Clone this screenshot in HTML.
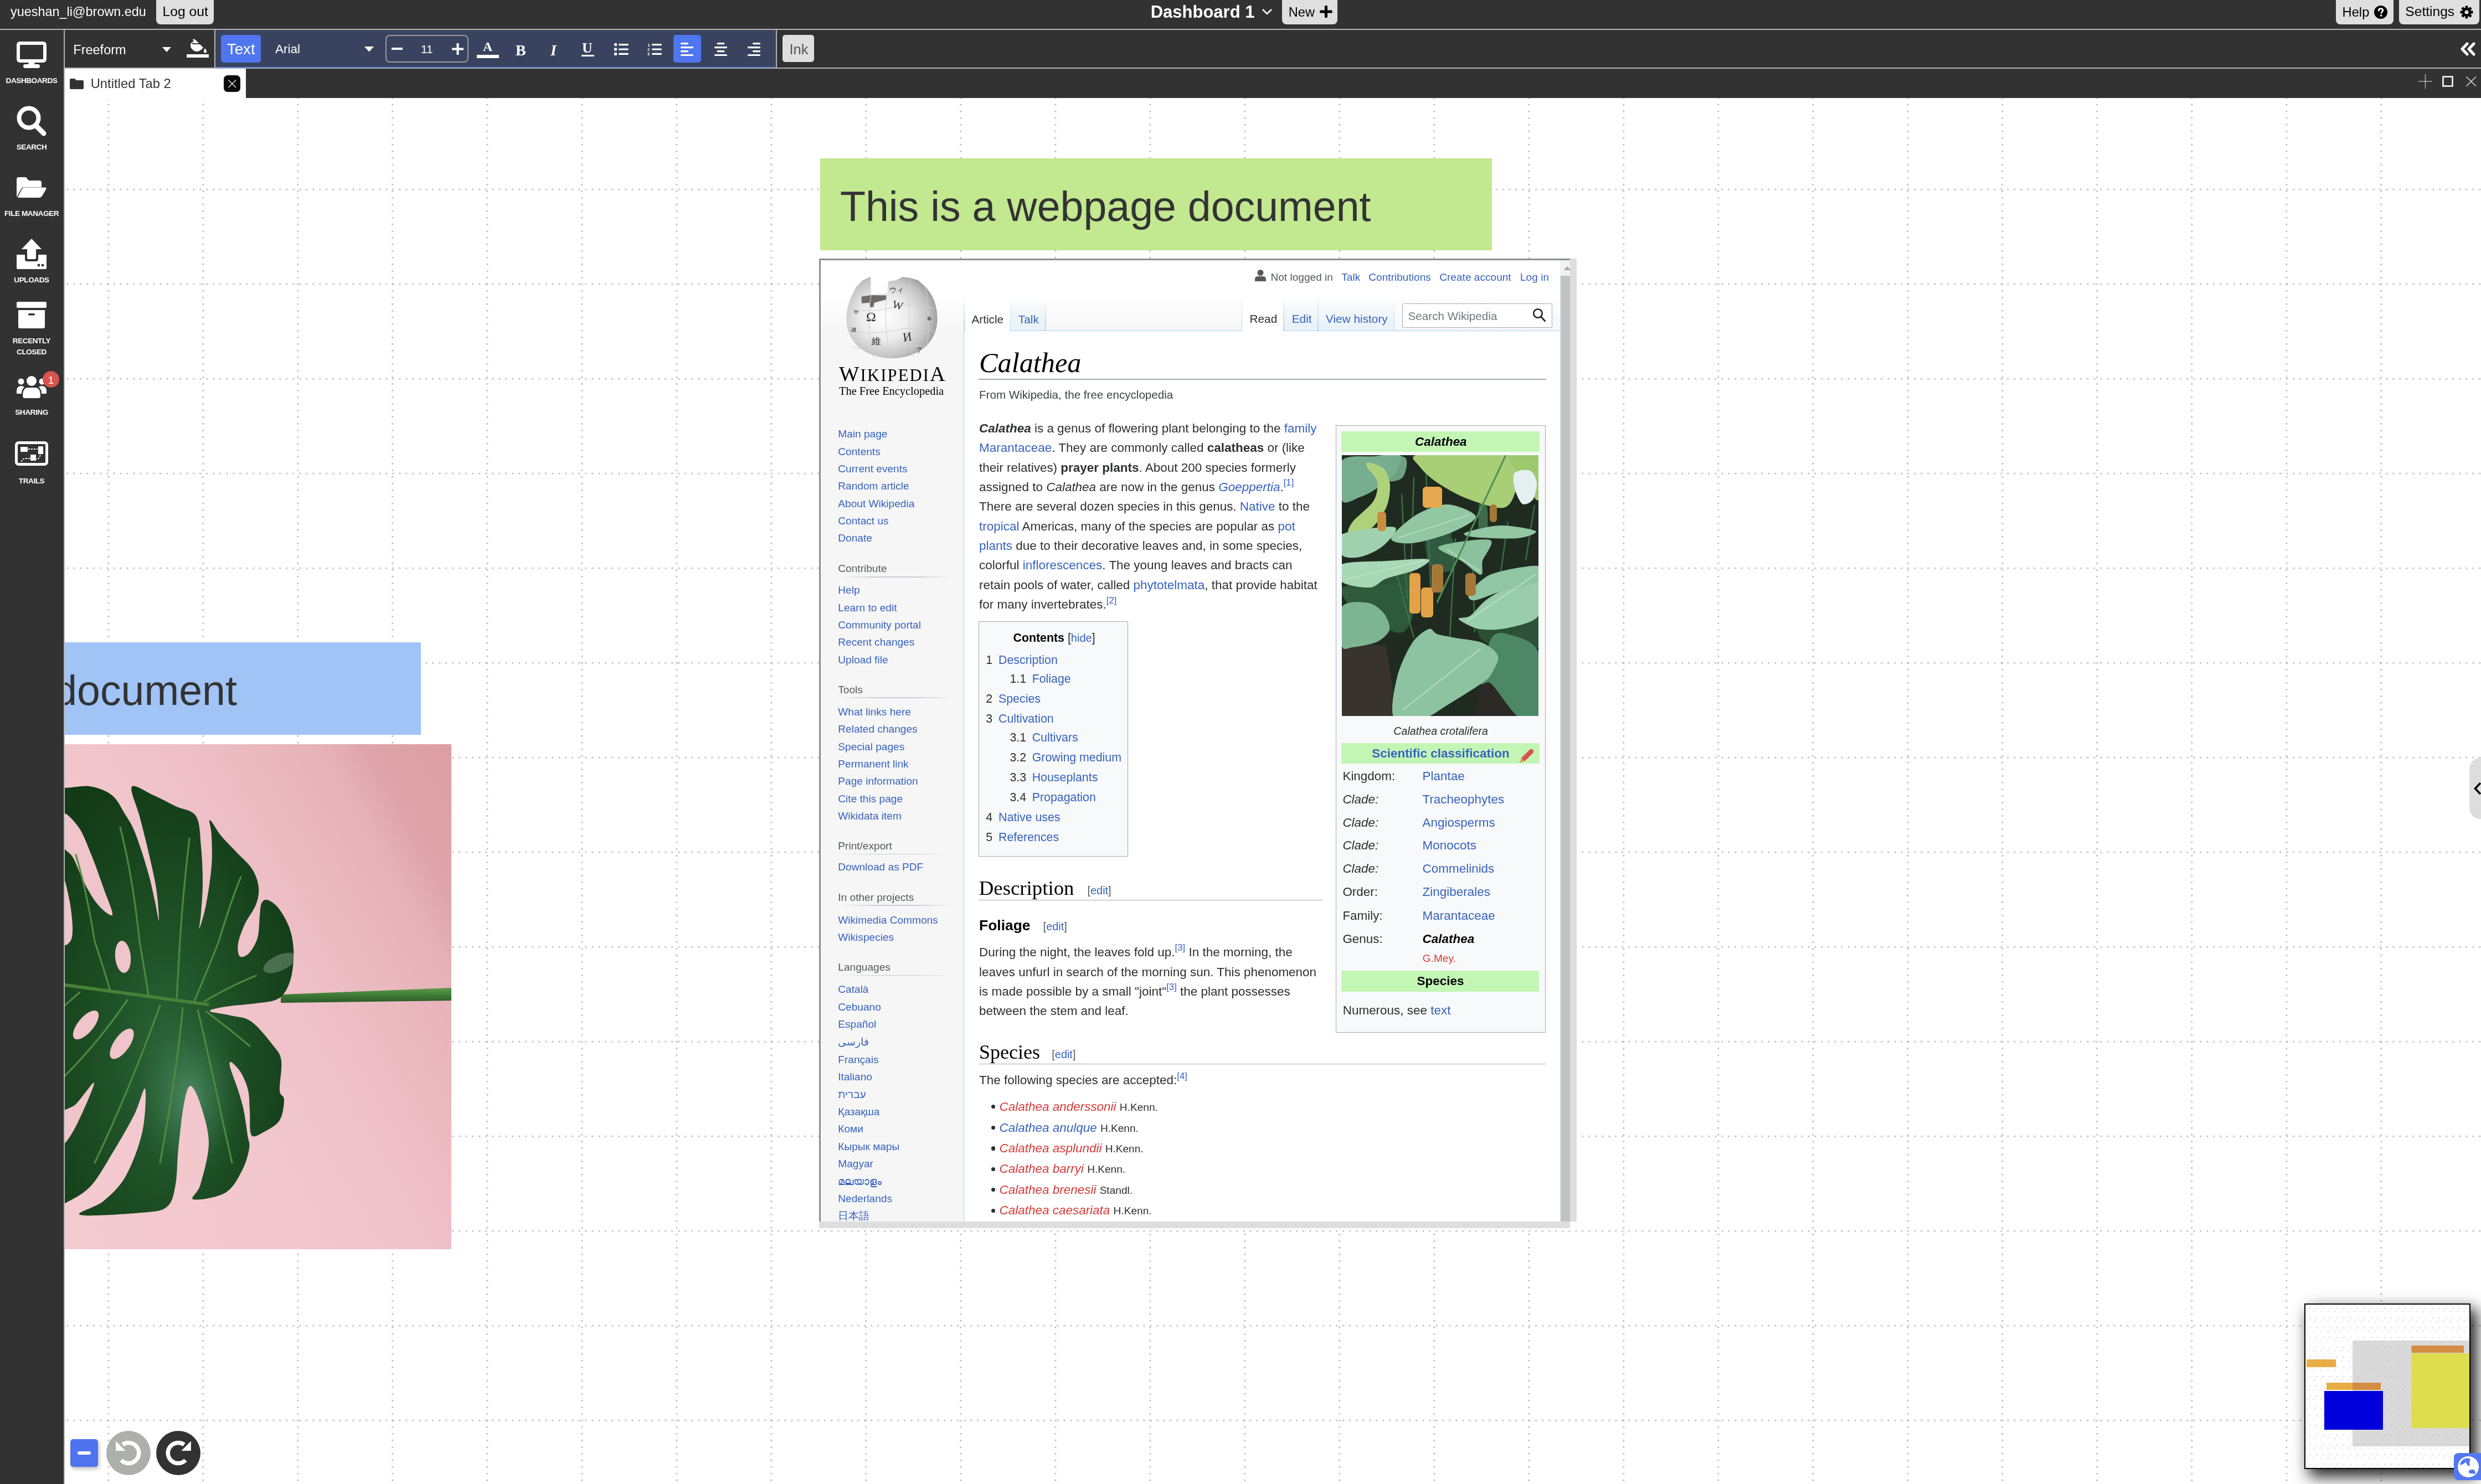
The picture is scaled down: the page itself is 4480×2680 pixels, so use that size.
<!DOCTYPE html><html><head><meta charset="utf-8"><style>html,body{margin:0;padding:0;width:4480px;height:2680px;overflow:hidden;background:#fff;font-family:"Liberation Sans",sans-serif}</style></head><body><div style="position:absolute;left:0;top:0;width:4480px;height:2680px;overflow:hidden;will-change:transform">
<svg style="position:absolute;left:0;top:0" width="4480" height="2680"><defs><pattern id="gv" x="194.5" y="8" width="171" height="12" patternUnits="userSpaceOnUse"><rect x="0" y="0" width="2.6" height="2.6" fill="#9d9d9d"/></pattern><pattern id="gh" x="0.5" y="340.8" width="12" height="171" patternUnits="userSpaceOnUse"><rect x="0" y="0" width="2.6" height="2.6" fill="#9d9d9d"/></pattern></defs><rect x="117" y="177" width="4363" height="2503" fill="#fff"/><rect x="117" y="177" width="4283" height="2503" fill="url(#gv)" opacity="0.75"/><rect x="117" y="177" width="4363" height="2503" fill="url(#gh)" opacity="0.75"/></svg>
<div style="position:absolute;left:0px;top:0px;width:4480px;height:52px;background:#323232"></div>
<div style="position:absolute;left:0px;top:52px;width:4480px;height:2px;background:#b4b4b4"></div>
<div style="position:absolute;left:19px;top:21.39px;line-height:0;white-space:nowrap;font-family:'Liberation Sans', sans-serif;font-size:23.4px;color:#fff;font-weight:normal;font-style:normal;">yueshan_li@brown.edu</div>
<div style="position:absolute;left:282px;top:-8px;width:104px;height:51.5px;background:#dfdfdf;border-radius:8px"></div>
<div style="position:absolute;left:293.5px;top:21.24px;line-height:0;white-space:nowrap;font-family:'Liberation Sans', sans-serif;font-size:24.7px;color:#000;font-weight:normal;font-style:normal;">Log out</div>
<div style="position:absolute;left:2077.7px;top:21.86px;line-height:0;white-space:nowrap;font-family:'Liberation Sans', sans-serif;font-size:31px;color:#fff;font-weight:bold;font-style:normal;">Dashboard 1</div>
<svg style="position:absolute;left:2278px;top:14px" width="20" height="14"><path d="M2 3 L10 11 L18 3" stroke="#fff" stroke-width="2.6" fill="none"/></svg>
<div style="position:absolute;left:2315.2px;top:-8px;width:99.4px;height:52px;background:#dfdfdf;border-radius:8px"></div>
<div style="position:absolute;left:2326.8px;top:22.02px;line-height:0;white-space:nowrap;font-family:'Liberation Sans', sans-serif;font-size:23.6px;color:#000;font-weight:normal;font-style:normal;">New</div>
<svg style="position:absolute;left:2383px;top:10px" width="23" height="22"><path d="M11.5 2 V20 M2.5 11 H20.5" stroke="#000" stroke-width="5" stroke-linecap="round"/></svg>
<div style="position:absolute;left:4218px;top:-8px;width:104px;height:52px;background:#dfdfdf;border-radius:8px"></div>
<div style="position:absolute;left:4229.6px;top:21.79px;line-height:0;white-space:nowrap;font-family:'Liberation Sans', sans-serif;font-size:23.7px;color:#000;font-weight:normal;font-style:normal;">Help</div>
<svg style="position:absolute;left:4287px;top:9.5px" width="24" height="24" viewBox="0 0 24 24"><circle cx="12" cy="12" r="12" fill="#000"/><path d="M8.3 9.2 C8.3 6.9 10 5.6 12.1 5.6 C14.3 5.6 15.8 7 15.8 8.8 C15.8 10.9 13.3 11.3 13.1 13.4" stroke="#fff" stroke-width="2.8" fill="none" stroke-linecap="round"/><circle cx="12.6" cy="18" r="1.8" fill="#fff"/></svg>
<div style="position:absolute;left:4332px;top:-8px;width:145px;height:52px;background:#dfdfdf;border-radius:8px"></div>
<div style="position:absolute;left:4343.3px;top:21.48px;line-height:0;white-space:nowrap;font-family:'Liberation Sans', sans-serif;font-size:24.6px;color:#000;font-weight:normal;font-style:normal;">Settings</div>
<svg style="position:absolute;left:4442px;top:9.5px" width="24" height="24" viewBox="0 0 24 24"><g fill="#000"><circle cx="12" cy="12" r="8.2"/><rect x="9.6" y="0.5" width="4.8" height="6" rx="1" transform="rotate(0 12 12)"/><rect x="9.6" y="0.5" width="4.8" height="6" rx="1" transform="rotate(45 12 12)"/><rect x="9.6" y="0.5" width="4.8" height="6" rx="1" transform="rotate(90 12 12)"/><rect x="9.6" y="0.5" width="4.8" height="6" rx="1" transform="rotate(135 12 12)"/><rect x="9.6" y="0.5" width="4.8" height="6" rx="1" transform="rotate(180 12 12)"/><rect x="9.6" y="0.5" width="4.8" height="6" rx="1" transform="rotate(225 12 12)"/><rect x="9.6" y="0.5" width="4.8" height="6" rx="1" transform="rotate(270 12 12)"/><rect x="9.6" y="0.5" width="4.8" height="6" rx="1" transform="rotate(315 12 12)"/></g><circle cx="12" cy="12" r="3.6" fill="#dfdfdf"/></svg>
<div style="position:absolute;left:0px;top:54px;width:115px;height:2626px;background:#323232"></div>
<div style="position:absolute;left:115px;top:54px;width:2px;height:2626px;background:#b4b4b4"></div>
<svg style="position:absolute;left:30px;top:75px" width="54" height="48" viewBox="0 0 54 48"><rect x="3" y="3" width="48" height="32" rx="3" fill="none" stroke="#fff" stroke-width="6"/><path d="M22 37 L21 42 H32 L33 37 Z" fill="#fff"/><rect x="12" y="41" width="30" height="7" rx="3.5" fill="#fff"/></svg>
<div style="position:absolute;left:57px;transform:translateX(-50%);top:146.29px;line-height:0;white-space:nowrap;font-family:'Liberation Sans', sans-serif;font-size:13.6px;color:#fff;font-weight:bold;font-style:normal;letter-spacing:-0.45px">DASHBOARDS</div>
<svg style="position:absolute;left:30px;top:191px" width="55" height="56" viewBox="0 0 55 56"><circle cx="22" cy="22" r="17.5" fill="none" stroke="#fff" stroke-width="8"/><path d="M36 37 L49 50" stroke="#fff" stroke-width="9" stroke-linecap="round"/></svg>
<div style="position:absolute;left:57px;transform:translateX(-50%);top:266.29px;line-height:0;white-space:nowrap;font-family:'Liberation Sans', sans-serif;font-size:13.6px;color:#fff;font-weight:bold;font-style:normal;letter-spacing:-0.45px">SEARCH</div>
<svg style="position:absolute;left:30px;top:320px" width="54" height="37" viewBox="0 0 54 37"><path d="M0 4 Q0 0 4 0 H17 L22 6 H41 Q45 6 45 10 V18 H14 Q10 18 8 22 L0 36 Z" fill="#fff"/><path d="M12 18.5 H51 Q55 18.5 53 22 L46 34 Q44 37 40 37 H4 Q1 37 3 34 L10 21 Q11 18.5 14 18.5 Z" fill="#fff"/></svg>
<div style="position:absolute;left:57px;transform:translateX(-50%);top:386.29px;line-height:0;white-space:nowrap;font-family:'Liberation Sans', sans-serif;font-size:13.6px;color:#fff;font-weight:bold;font-style:normal;letter-spacing:-0.45px">FILE MANAGER</div>
<svg style="position:absolute;left:30px;top:431px" width="54" height="55" viewBox="0 0 54 55"><path d="M27 0 L45 19 H35 V35 Q35 37 33 37 H21 Q19 37 19 35 V19 H9 Z" fill="#fff"/><path d="M0 29 H15 V37 Q15 41 19 41 H35 Q39 41 39 37 V29 H54 V53 Q54 55 52 55 H2 Q0 55 0 53 Z" fill="#fff"/><circle cx="40" cy="48" r="2.4" fill="#323232"/><circle cx="47" cy="48" r="2.4" fill="#323232"/></svg>
<div style="position:absolute;left:57px;transform:translateX(-50%);top:506.29px;line-height:0;white-space:nowrap;font-family:'Liberation Sans', sans-serif;font-size:13.6px;color:#fff;font-weight:bold;font-style:normal;letter-spacing:-0.45px">UPLOADS</div>
<svg style="position:absolute;left:30px;top:545px" width="54" height="48" viewBox="0 0 54 48"><rect x="0" y="0" width="54" height="11" rx="2" fill="#fff"/><path d="M3 15 H51 V45 Q51 48 48 48 H6 Q3 48 3 45 Z" fill="#fff"/><rect x="21" y="21" width="12" height="3.5" rx="1.5" fill="#323232"/></svg>
<div style="position:absolute;left:57px;transform:translateX(-50%);top:616.29px;line-height:0;white-space:nowrap;font-family:'Liberation Sans', sans-serif;font-size:13.6px;color:#fff;font-weight:bold;font-style:normal;letter-spacing:-0.45px">RECENTLY</div>
<div style="position:absolute;left:57px;transform:translateX(-50%);top:636.29px;line-height:0;white-space:nowrap;font-family:'Liberation Sans', sans-serif;font-size:13.6px;color:#fff;font-weight:bold;font-style:normal;letter-spacing:-0.45px">CLOSED</div>
<svg style="position:absolute;left:30px;top:679px" width="54" height="40" viewBox="0 0 54 40"><circle cx="8" cy="10" r="5.5" fill="#fff"/><circle cx="46" cy="10" r="5.5" fill="#fff"/><circle cx="27" cy="9" r="9" fill="#fff"/><path d="M0 28 Q0 18 8 18 Q12 18 14 20 Q9 24 9 32 H0 Z" fill="#fff"/><path d="M54 28 Q54 18 46 18 Q42 18 40 20 Q45 24 45 32 H54 Z" fill="#fff"/><path d="M11 36 Q11 21 21 21 H33 Q43 21 43 36 Q43 40 39 40 H15 Q11 40 11 36 Z" fill="#fff"/></svg>
<div style="position:absolute;left:77px;top:670px;width:30px;height:30px;border-radius:15px;background:#d9534f"></div>
<div style="position:absolute;left:92px;transform:translateX(-50%);top:687.42px;line-height:0;white-space:nowrap;font-family:'Liberation Sans', sans-serif;font-size:19px;color:#fff;font-weight:normal;font-style:normal;">1</div>
<div style="position:absolute;left:57px;transform:translateX(-50%);top:745.29px;line-height:0;white-space:nowrap;font-family:'Liberation Sans', sans-serif;font-size:13.6px;color:#fff;font-weight:bold;font-style:normal;letter-spacing:-0.45px">SHARING</div>
<svg style="position:absolute;left:27px;top:797px" width="60" height="44" viewBox="0 0 60 44"><rect x="2.5" y="2.5" width="55" height="39" rx="4" fill="none" stroke="#fff" stroke-width="5"/><rect x="10" y="10" width="13" height="9" fill="#fff"/><rect x="42" y="9" width="9" height="14" fill="#fff"/><rect x="28" y="24" width="10" height="11" fill="#fff"/><path d="M24 14 H41 M46 25 L42 32 H39 M27 31 H20 Q13 31 12 37" stroke="#fff" stroke-width="1.8" stroke-dasharray="3 2" fill="none"/></svg>
<div style="position:absolute;left:57px;transform:translateX(-50%);top:869.29px;line-height:0;white-space:nowrap;font-family:'Liberation Sans', sans-serif;font-size:13.6px;color:#fff;font-weight:bold;font-style:normal;letter-spacing:-0.45px">TRAILS</div>
<div style="position:absolute;left:117px;top:54px;width:270px;height:68px;background:#323232"></div>
<div style="position:absolute;left:117px;top:122px;width:4363px;height:2px;background:#b4b4b4"></div>
<div style="position:absolute;left:387px;top:54px;width:2px;height:68px;background:#b4b4b4"></div>
<div style="position:absolute;left:132.3px;top:90.36px;line-height:0;white-space:nowrap;font-family:'Liberation Sans', sans-serif;font-size:23.5px;color:#fff;font-weight:normal;font-style:normal;">Freeform</div>
<svg style="position:absolute;left:293px;top:85px" width="16" height="10"><path d="M0 0 H16 L8 9 Z" fill="#fff"/></svg>
<svg style="position:absolute;left:336px;top:69px" width="42" height="36" viewBox="0 0 42 36"><path d="M9 9 L17 3 L31 17 Q25 24 20 24 Q15 24 11 20 Q6 15 9 9 Z" fill="#fff"/><path d="M11 10 H27" stroke="#323232" stroke-width="2"/><path d="M13 2 L20 9" stroke="#fff" stroke-width="3"/><path d="M34 18 Q37 22 37 24 Q37 26.5 34.5 26.5 Q32 26.5 32 24 Q32 22 34 18 Z" fill="#fff"/><rect x="1" y="29" width="40" height="6" fill="#fff"/></svg>
<div style="position:absolute;left:389px;top:54px;width:1012px;height:67px;background:#39435f"></div>
<div style="position:absolute;left:389px;top:121px;width:1012px;height:1.5px;background:#6f8fcf"></div>
<div style="position:absolute;left:1401px;top:54px;width:2px;height:68px;background:#b4b4b4"></div>
<div style="position:absolute;left:1403px;top:54px;width:3077px;height:68px;background:#323232"></div>
<div style="position:absolute;left:399px;top:63px;width:72px;height:50px;background:#4f75ef;border-radius:5px"></div>
<div style="position:absolute;left:409.8px;top:88.90px;line-height:0;white-space:nowrap;font-family:'Liberation Sans', sans-serif;font-size:27.7px;color:#fff;font-weight:normal;font-style:normal;">Text</div>
<div style="position:absolute;left:496.9px;top:89.17px;line-height:0;white-space:nowrap;font-family:'Liberation Sans', sans-serif;font-size:22.6px;color:#fff;font-weight:normal;font-style:normal;">Arial</div>
<svg style="position:absolute;left:658px;top:84px" width="17" height="10"><path d="M0 0 H17 L8.5 9.5 Z" fill="#fff"/></svg>
<div style="position:absolute;left:696px;top:63px;width:150px;height:50px;border:2px solid #9a9a9a;border-radius:8px;box-sizing:border-box"></div>
<div style="position:absolute;left:707px;top:86px;width:20px;height:4px;background:#fff"></div>
<div style="position:absolute;left:760px;top:89.02px;line-height:0;white-space:nowrap;font-family:'Liberation Sans', sans-serif;font-size:21px;color:#fff;font-weight:normal;font-style:normal;">11</div>
<svg style="position:absolute;left:816px;top:78px" width="21" height="21"><path d="M10.5 1 V20 M1 10.5 H20" stroke="#fff" stroke-width="4" stroke-linecap="round"/></svg>
<div style="position:absolute;left:872px;top:83.68px;line-height:0;white-space:nowrap;font-family:'Liberation Sans', sans-serif;font-size:24px;color:#fff;font-weight:bold;font-style:normal;font-family:'Liberation Serif',serif">A</div>
<div style="position:absolute;left:861px;top:99px;width:40px;height:6px;background:#fff"></div>
<div style="position:absolute;left:931px;top:90.55px;line-height:0;white-space:nowrap;font-family:'Liberation Serif', serif;font-size:28px;color:#fff;font-weight:bold;font-style:normal;">B</div>
<div style="position:absolute;left:994px;top:90.55px;line-height:0;white-space:nowrap;font-family:'Liberation Serif', serif;font-size:28px;color:#fff;font-weight:bold;font-style:italic;">I</div>
<div style="position:absolute;left:1051px;top:87.22px;line-height:0;white-space:nowrap;font-family:'Liberation Serif', serif;font-size:26px;color:#fff;font-weight:bold;font-style:normal;">U</div>
<div style="position:absolute;left:1050px;top:99px;width:23px;height:3px;background:#fff"></div>
<svg style="position:absolute;left:1109px;top:78px" width="26" height="22" viewBox="0 0 26 22"><g fill="#fff"><rect x="0" y="0" width="5" height="5" rx="1"/><rect x="0" y="8.5" width="5" height="5" rx="1"/><rect x="0" y="17" width="5" height="5" rx="1"/><rect x="8" y="1" width="18" height="3.2" rx="1.5"/><rect x="8" y="9.4" width="18" height="3.2" rx="1.5"/><rect x="8" y="17.8" width="18" height="3.2" rx="1.5"/></g></svg>
<svg style="position:absolute;left:1169px;top:77px" width="26" height="24" viewBox="0 0 26 24"><g fill="#fff" font-family="Liberation Sans" font-weight="bold" font-size="7.5"><text x="0.5" y="7">1</text><text x="0" y="15">2</text><text x="0" y="23">3</text></g><g fill="#fff"><rect x="8" y="2" width="18" height="3.2" rx="1.5"/><rect x="8" y="10.4" width="18" height="3.2" rx="1.5"/><rect x="8" y="18.8" width="18" height="3.2" rx="1.5"/></g></svg>
<div style="position:absolute;left:1216px;top:63px;width:50px;height:49.5px;background:#4f75ef;border-radius:5px"></div>
<svg style="position:absolute;left:1229px;top:77px" width="23" height="24" viewBox="0 0 23 24"><g fill="#fff"><rect x="0" y="0" width="14" height="3.2" rx="1.5"/><rect x="0" y="7" width="23" height="3.2" rx="1.5"/><rect x="0" y="14" width="14" height="3.2" rx="1.5"/><rect x="0" y="21" width="23" height="3.2" rx="1.5"/></g></svg>
<svg style="position:absolute;left:1290px;top:77px" width="23" height="24" viewBox="0 0 23 24"><g fill="#fff"><rect x="4.5" y="0" width="14" height="3.2" rx="1.5"/><rect x="0.0" y="7" width="23" height="3.2" rx="1.5"/><rect x="4.5" y="14" width="14" height="3.2" rx="1.5"/><rect x="0.0" y="21" width="23" height="3.2" rx="1.5"/></g></svg>
<svg style="position:absolute;left:1350px;top:77px" width="23" height="24" viewBox="0 0 23 24"><g fill="#fff"><rect x="9" y="0" width="14" height="3.2" rx="1.5"/><rect x="0" y="7" width="23" height="3.2" rx="1.5"/><rect x="9" y="14" width="14" height="3.2" rx="1.5"/><rect x="0" y="21" width="23" height="3.2" rx="1.5"/></g></svg>
<div style="position:absolute;left:1413px;top:63px;width:57px;height:49px;background:#dedede;border-radius:5px"></div>
<div style="position:absolute;left:1425.5px;top:89.16px;line-height:0;white-space:nowrap;font-family:'Liberation Sans', sans-serif;font-size:25.5px;color:#555;font-weight:normal;font-style:normal;">Ink</div>
<svg style="position:absolute;left:4441px;top:76px" width="30" height="25" viewBox="0 0 30 25"><path d="M14 3 L5 12.5 L14 22 M26 3 L17 12.5 L26 22" stroke="#fff" stroke-width="5" fill="none" stroke-linecap="round" stroke-linejoin="round"/></svg>
<div style="position:absolute;left:117px;top:124px;width:4363px;height:53px;background:#323232"></div>
<div style="position:absolute;left:117px;top:124px;width:327px;height:53.5px;background:#fff"></div>
<svg style="position:absolute;left:126px;top:142px" width="25" height="19" viewBox="0 0 25 19"><path d="M0 2 Q0 0 2 0 H9 L12 3 H23 Q25 3 25 5 V17 Q25 19 23 19 H2 Q0 19 0 17 Z" fill="#323232"/></svg>
<div style="position:absolute;left:163.7px;top:151.45px;line-height:0;white-space:nowrap;font-family:'Liberation Sans', sans-serif;font-size:23.8px;color:#333;font-weight:normal;font-style:normal;">Untitled Tab 2</div>
<div style="position:absolute;left:404px;top:135.8px;width:30px;height:30px;background:#0a0a0a;border-radius:7px"></div>
<svg style="position:absolute;left:404px;top:135.8px" width="30" height="30"><path d="M8.5 8.5 L22 22 M22 8.5 L8.5 22" stroke="#ddd" stroke-width="1.6"/></svg>
<svg style="position:absolute;left:4366px;top:133px" width="110" height="30"><g stroke="#fff" stroke-width="1.5" stroke-dasharray="1.5 1" fill="none"><path d="M13.5 1 V27 M1 14 H26"/></g><rect x="45.5" y="5.5" width="17" height="17" stroke="#fff" stroke-width="2.5" fill="none"/><path d="M87.5 5.5 L105 22.5 M105 5.5 L87.5 22.5" stroke="#ddd" stroke-width="1.6"/></svg>
<div style="position:absolute;left:4459px;top:1368.6px;width:40px;height:110.4px;background:#dddddd;border-radius:20px 0 0 20px"></div>
<svg style="position:absolute;left:4466px;top:1412px" width="14" height="24"><path d="M13 2 L3.5 12 L13 22" stroke="#000" stroke-width="3.6" fill="none"/></svg>
<div style="position:absolute;left:127px;top:2599px;width:50px;height:50px;background:#4f72ee;border-radius:5px;box-shadow:2px 4px 6px rgba(0,0,0,0.25)"></div>
<div style="position:absolute;left:140px;top:2621px;width:24px;height:6px;background:#fff;border-radius:3px"></div>
<svg style="position:absolute;left:192px;top:2584px" width="80" height="80" viewBox="0 0 80 80"><circle cx="40" cy="40" r="40" fill="#adafad"/><path d="M29.5 25 A18.5 18.5 0 1 1 27 53" stroke="#fff" stroke-width="7.5" fill="none"/><path d="M17.2 18.5 V36 H34.5 Z" fill="#fff"/></svg>
<svg style="position:absolute;left:282px;top:2584px" width="80" height="80" viewBox="0 0 80 80"><circle cx="40" cy="40" r="40" fill="#323232"/><path d="M50.5 25 A18.5 18.5 0 1 0 53 53" stroke="#fff" stroke-width="7.5" fill="none"/><path d="M62.8 18.5 V36 H45.5 Z" fill="#fff"/></svg>
<div style="position:absolute;left:1481px;top:286px;width:1213px;height:166px;background:#c2e890"></div>
<div style="position:absolute;left:1517px;top:373.41px;line-height:0;white-space:nowrap;font-family:'Liberation Sans', sans-serif;font-size:75.3px;color:#333;font-weight:normal;font-style:normal;">This is a webpage document</div>
<div style="position:absolute;left:117px;top:1160px;width:643px;height:167px;background:#a1c4f7;overflow:hidden"><div style="position:absolute;right:332.2px;top:87.41px;line-height:0;white-space:nowrap;font-family:'Liberation Sans', sans-serif;font-size:75.3px;color:#333">This is a webpage document</div></div>
<div style="position:absolute;left:117px;top:1344px;width:698px;height:912px;overflow:hidden;background:linear-gradient(61deg, #f4cbd1 0%, #f1c5cc 45%, #ecbcc3 65%, #e6b2b9 80%, #dfa4ab 87%, #dc9da4 100%)">
<svg width="698" height="912" viewBox="0 0 698 912" style="position:absolute;left:0;top:0">
<defs>
<radialGradient id="lfg" cx="0.5" cy="0.62" r="0.62"><stop offset="0" stop-color="#2c6438"/><stop offset="0.45" stop-color="#1d4e24"/><stop offset="1" stop-color="#123a15"/></radialGradient><radialGradient id="lhl" cx="0.5" cy="0.5" r="0.5"><stop offset="0" stop-color="#5a9a72" stop-opacity="0.75"/><stop offset="0.6" stop-color="#3f7d55" stop-opacity="0.35"/><stop offset="1" stop-color="#2f6b3e" stop-opacity="0"/></radialGradient><clipPath id="lclip"><path d="M-40.0 60.0 C-34.2 -68.7 -19.2 75.3 -5.0 78.0 C9.2 80.7 30.0 73.7 45.0 76.0 C60.0 78.3 74.5 83.8 85.0 92.0 C95.5 100.2 101.0 113.7 108.0 125.0 C115.0 136.3 120.0 142.5 127.0 160.0 C134.0 177.5 144.2 210.0 150.0 230.0 C155.8 250.0 158.7 265.3 162.0 280.0 C165.3 294.7 169.5 321.3 170.0 318.0 C170.5 314.7 168.3 281.3 165.0 260.0 C161.7 238.7 155.0 211.7 150.0 190.0 C145.0 168.3 139.8 148.8 135.0 130.0 C130.2 111.2 116.8 83.3 121.0 77.0 C125.2 70.7 146.8 86.2 160.0 92.0 C173.2 97.8 187.2 105.7 200.0 112.0 C212.8 118.3 229.3 117.8 237.0 130.0 C244.7 142.2 244.0 165.0 246.0 185.0 C248.0 205.0 249.0 230.0 249.0 250.0 C249.0 270.0 247.0 291.2 246.0 305.0 C245.0 318.8 241.5 335.5 243.0 333.0 C244.5 330.5 251.3 308.8 255.0 290.0 C258.7 271.2 263.3 240.8 265.0 220.0 C266.7 199.2 265.5 178.8 265.0 165.0 C264.5 151.2 259.2 137.0 262.0 137.0 C264.8 137.0 274.0 155.3 282.0 165.0 C290.0 174.7 300.7 185.0 310.0 195.0 C319.3 205.0 331.3 214.5 338.0 225.0 C344.7 235.5 348.8 247.2 350.0 258.0 C351.2 268.8 349.2 278.8 345.0 290.0 C340.8 301.2 330.3 313.3 325.0 325.0 C319.7 336.7 314.5 350.3 313.0 360.0 C311.5 369.7 312.8 380.0 316.0 383.0 C319.2 386.0 326.7 383.5 332.0 378.0 C337.3 372.5 344.7 361.3 348.0 350.0 C351.3 338.7 350.8 320.3 352.0 310.0 C353.2 299.7 352.8 292.8 355.0 288.0 C357.2 283.2 360.0 279.8 365.0 281.0 C370.0 282.2 378.3 286.8 385.0 295.0 C391.7 303.2 400.3 317.5 405.0 330.0 C409.7 342.5 412.2 355.8 413.0 370.0 C413.8 384.2 412.5 402.2 410.0 415.0 C407.5 427.8 403.0 439.2 398.0 447.0 C393.0 454.8 388.8 458.5 380.0 462.0 C371.2 465.5 360.0 466.0 345.0 468.0 C330.0 470.0 303.8 471.7 290.0 474.0 C276.2 476.3 260.3 479.3 262.0 482.0 C263.7 484.7 287.5 486.8 300.0 490.0 C312.5 493.2 324.2 491.8 337.0 501.0 C349.8 510.2 368.0 533.2 377.0 545.0 C386.0 556.8 389.2 558.7 391.0 572.0 C392.8 585.3 387.2 613.3 388.0 625.0 C388.8 636.7 396.0 633.0 396.0 642.0 C396.0 651.0 394.0 669.3 388.0 679.0 C382.0 688.7 368.5 695.5 360.0 700.0 C351.5 704.5 341.3 712.3 337.0 706.0 C332.7 699.7 335.0 675.5 334.0 662.0 C333.0 648.5 333.7 636.5 331.0 625.0 C328.3 613.5 323.2 601.5 318.0 593.0 C312.8 584.5 303.2 575.3 300.0 574.0 C296.8 572.7 296.8 576.5 299.0 585.0 C301.2 593.5 309.0 612.3 313.0 625.0 C317.0 637.7 320.2 647.5 323.0 661.0 C325.8 674.5 328.3 694.5 330.0 706.0 C331.7 717.5 334.7 719.3 333.0 730.0 C331.3 740.7 327.2 756.7 320.0 770.0 C312.8 783.3 304.7 801.3 290.0 810.0 C275.3 818.7 239.5 824.5 232.0 822.0 C224.5 819.5 240.3 812.0 245.0 795.0 C249.7 778.0 260.0 744.2 260.0 720.0 C260.0 695.8 250.5 667.2 245.0 650.0 C239.5 632.8 232.0 617.0 227.0 617.0 C222.0 617.0 218.7 631.2 215.0 650.0 C211.3 668.8 207.5 705.8 205.0 730.0 C202.5 754.2 203.3 777.5 200.0 795.0 C196.7 812.5 195.0 826.5 185.0 835.0 C175.0 843.5 166.2 843.5 140.0 846.0 C113.8 848.5 39.7 853.5 28.0 850.0 C16.3 846.5 56.3 836.7 70.0 825.0 C83.7 813.3 98.3 800.8 110.0 780.0 C121.7 759.2 134.2 726.3 140.0 700.0 C145.8 673.7 147.5 627.0 145.0 622.0 C142.5 617.0 135.0 650.3 125.0 670.0 C115.0 689.7 98.3 718.3 85.0 740.0 C71.7 761.7 60.0 784.7 45.0 800.0 C30.0 815.3 9.2 823.7 -5.0 832.0 C-19.2 840.3 -34.2 978.7 -40.0 850.0 C-45.8 721.3 -45.8 188.7 -40.0 60.0 Z"/></clipPath>
<linearGradient id="stg" x1="0" y1="0" x2="0" y2="1"><stop offset="0" stop-color="#5f9a4c"/><stop offset="0.5" stop-color="#3e7a35"/><stop offset="1" stop-color="#2a5a26"/></linearGradient>
</defs>
<path d="M390 452 L698 440 L698 463 L390 467 Z" fill="url(#stg)"/>
<path fill="url(#lfg)" d="M-40.0 60.0 C-34.2 -68.7 -19.2 75.3 -5.0 78.0 C9.2 80.7 30.0 73.7 45.0 76.0 C60.0 78.3 74.5 83.8 85.0 92.0 C95.5 100.2 101.0 113.7 108.0 125.0 C115.0 136.3 120.0 142.5 127.0 160.0 C134.0 177.5 144.2 210.0 150.0 230.0 C155.8 250.0 158.7 265.3 162.0 280.0 C165.3 294.7 169.5 321.3 170.0 318.0 C170.5 314.7 168.3 281.3 165.0 260.0 C161.7 238.7 155.0 211.7 150.0 190.0 C145.0 168.3 139.8 148.8 135.0 130.0 C130.2 111.2 116.8 83.3 121.0 77.0 C125.2 70.7 146.8 86.2 160.0 92.0 C173.2 97.8 187.2 105.7 200.0 112.0 C212.8 118.3 229.3 117.8 237.0 130.0 C244.7 142.2 244.0 165.0 246.0 185.0 C248.0 205.0 249.0 230.0 249.0 250.0 C249.0 270.0 247.0 291.2 246.0 305.0 C245.0 318.8 241.5 335.5 243.0 333.0 C244.5 330.5 251.3 308.8 255.0 290.0 C258.7 271.2 263.3 240.8 265.0 220.0 C266.7 199.2 265.5 178.8 265.0 165.0 C264.5 151.2 259.2 137.0 262.0 137.0 C264.8 137.0 274.0 155.3 282.0 165.0 C290.0 174.7 300.7 185.0 310.0 195.0 C319.3 205.0 331.3 214.5 338.0 225.0 C344.7 235.5 348.8 247.2 350.0 258.0 C351.2 268.8 349.2 278.8 345.0 290.0 C340.8 301.2 330.3 313.3 325.0 325.0 C319.7 336.7 314.5 350.3 313.0 360.0 C311.5 369.7 312.8 380.0 316.0 383.0 C319.2 386.0 326.7 383.5 332.0 378.0 C337.3 372.5 344.7 361.3 348.0 350.0 C351.3 338.7 350.8 320.3 352.0 310.0 C353.2 299.7 352.8 292.8 355.0 288.0 C357.2 283.2 360.0 279.8 365.0 281.0 C370.0 282.2 378.3 286.8 385.0 295.0 C391.7 303.2 400.3 317.5 405.0 330.0 C409.7 342.5 412.2 355.8 413.0 370.0 C413.8 384.2 412.5 402.2 410.0 415.0 C407.5 427.8 403.0 439.2 398.0 447.0 C393.0 454.8 388.8 458.5 380.0 462.0 C371.2 465.5 360.0 466.0 345.0 468.0 C330.0 470.0 303.8 471.7 290.0 474.0 C276.2 476.3 260.3 479.3 262.0 482.0 C263.7 484.7 287.5 486.8 300.0 490.0 C312.5 493.2 324.2 491.8 337.0 501.0 C349.8 510.2 368.0 533.2 377.0 545.0 C386.0 556.8 389.2 558.7 391.0 572.0 C392.8 585.3 387.2 613.3 388.0 625.0 C388.8 636.7 396.0 633.0 396.0 642.0 C396.0 651.0 394.0 669.3 388.0 679.0 C382.0 688.7 368.5 695.5 360.0 700.0 C351.5 704.5 341.3 712.3 337.0 706.0 C332.7 699.7 335.0 675.5 334.0 662.0 C333.0 648.5 333.7 636.5 331.0 625.0 C328.3 613.5 323.2 601.5 318.0 593.0 C312.8 584.5 303.2 575.3 300.0 574.0 C296.8 572.7 296.8 576.5 299.0 585.0 C301.2 593.5 309.0 612.3 313.0 625.0 C317.0 637.7 320.2 647.5 323.0 661.0 C325.8 674.5 328.3 694.5 330.0 706.0 C331.7 717.5 334.7 719.3 333.0 730.0 C331.3 740.7 327.2 756.7 320.0 770.0 C312.8 783.3 304.7 801.3 290.0 810.0 C275.3 818.7 239.5 824.5 232.0 822.0 C224.5 819.5 240.3 812.0 245.0 795.0 C249.7 778.0 260.0 744.2 260.0 720.0 C260.0 695.8 250.5 667.2 245.0 650.0 C239.5 632.8 232.0 617.0 227.0 617.0 C222.0 617.0 218.7 631.2 215.0 650.0 C211.3 668.8 207.5 705.8 205.0 730.0 C202.5 754.2 203.3 777.5 200.0 795.0 C196.7 812.5 195.0 826.5 185.0 835.0 C175.0 843.5 166.2 843.5 140.0 846.0 C113.8 848.5 39.7 853.5 28.0 850.0 C16.3 846.5 56.3 836.7 70.0 825.0 C83.7 813.3 98.3 800.8 110.0 780.0 C121.7 759.2 134.2 726.3 140.0 700.0 C145.8 673.7 147.5 627.0 145.0 622.0 C142.5 617.0 135.0 650.3 125.0 670.0 C115.0 689.7 98.3 718.3 85.0 740.0 C71.7 761.7 60.0 784.7 45.0 800.0 C30.0 815.3 9.2 823.7 -5.0 832.0 C-19.2 840.3 -34.2 978.7 -40.0 850.0 C-45.8 721.3 -45.8 188.7 -40.0 60.0 Z"/><g clip-path="url(#lclip)"><ellipse cx="225" cy="640" rx="95" ry="150" fill="url(#lhl)"/><ellipse cx="388" cy="395" rx="32" ry="14" transform="rotate(-25 388 395)" fill="#8aa592" opacity="0.45"/></g>
<g fill="#f0c4cb">
<path d="M-5.0 125.0 C0.0 120.0 16.2 137.5 25.0 150.0 C33.8 162.5 40.5 181.7 48.0 200.0 C55.5 218.3 63.7 242.0 70.0 260.0 C76.3 278.0 87.7 303.0 86.0 308.0 C84.3 313.0 68.5 299.7 60.0 290.0 C51.5 280.3 42.5 264.2 35.0 250.0 C27.5 235.8 21.7 216.7 15.0 205.0 C8.3 193.3 -1.7 193.3 -5.0 180.0 C-8.3 166.7 -10.0 130.0 -5.0 125.0 Z"/><path d="M-5.0 240.0 C-2.8 228.0 4.8 265.0 8.0 280.0 C11.2 295.0 13.7 317.3 14.0 330.0 C14.3 342.7 13.2 352.3 10.0 356.0 C6.8 359.7 -2.5 371.3 -5.0 352.0 C-7.5 332.7 -7.2 252.0 -5.0 240.0 Z"/><path d="M53.0 612.0 C53.0 605.3 29.7 640.7 20.0 650.0 C10.3 659.3 -0.8 656.0 -5.0 668.0 C-9.2 680.0 -9.2 718.3 -5.0 722.0 C-0.8 725.7 10.3 708.3 20.0 690.0 C29.7 671.7 53.0 618.7 53.0 612.0 Z"/>
<ellipse cx="105" cy="384" rx="14" ry="29" transform="rotate(-5 105 384)"/><ellipse cx="38" cy="507" rx="14" ry="32" transform="rotate(40 38 507)"/><ellipse cx="103" cy="541" rx="14" ry="32" transform="rotate(35 103 541)"/>
</g>
<g stroke="#4f8c40" stroke-width="3.2" fill="none" stroke-linecap="round" opacity="0.95">
<path d="M-5 434 C80 446 170 458 258 470" stroke-width="6" stroke="#4a8338"/>
<path d="M27 448 L-5 476"/>
<path d="M113 462 C80 510 40 560 -5 604"/>
<path d="M172 472 C140 560 100 660 54 756"/>
<path d="M213 477 C205 560 190 660 172 756"/>
<path d="M240 480 C260 560 280 660 302 756"/>
<path d="M256 483 C285 505 310 525 334 545"/>
<path d="M81 442 C72 410 62 380 54 356"/>
<path d="M151 453 C146 420 140 385 135 356"/>
<path d="M202 458 C204 420 206 385 208 356"/>
<path d="M234 464 C250 425 265 390 278 356"/>
<path d="M253 464 C285 445 315 430 345 418"/>
<path d="M54 356 C45 300 35 250 20 200"/><path d="M135 356 C128 290 118 220 100 150"/><path d="M208 356 C212 290 218 230 225 170"/><path d="M278 356 C292 310 305 270 318 240"/>
</g>
</svg></div>
<div style="position:absolute;left:4161px;top:2354px;width:300px;height:299px;box-sizing:border-box;border:2.2px solid #000;background:#fff;box-shadow:10px 12px 26px 2px rgba(0,0,0,0.85);overflow:hidden">
<svg width="300" height="300" style="position:absolute;left:-2px;top:-2px">
<defs><pattern id="mm" x="2" y="2" width="12.3" height="17.6" patternUnits="userSpaceOnUse"><rect x="7" y="6" width="1.6" height="1.6" fill="#b5b5b5"/><rect x="3" y="12" width="1.6" height="1.6" fill="#c0c0c0"/></pattern></defs>
<rect width="300" height="300" fill="url(#mm)"/>
<rect x="87" y="67" width="215" height="191" fill="#d9d9d9"/>
<rect x="87" y="67" width="215" height="191" fill="url(#mm)" opacity="0.8"/>
<rect x="4" y="101" width="53" height="14" fill="#e8ad45"/>
<rect x="40" y="143" width="49" height="13" fill="#e8ad45"/>
<rect x="87" y="143" width="51" height="13" fill="#d48d42"/>
<rect x="36" y="158" width="106" height="70" fill="#0000dd"/>
<rect x="193.5" y="76" width="94.5" height="13" fill="#d48c42"/>
<rect x="193.5" y="90" width="110" height="135" fill="#dddd4d"/>
</svg></div>
<div style="position:absolute;left:4431px;top:2624px;width:55px;height:49px;background:#5478ef;border-radius:8px"></div>
<svg style="position:absolute;left:4436px;top:2628px" width="42" height="42" viewBox="0 0 42 42"><circle cx="21" cy="21" r="19" fill="#fff"/><path d="M6 16 Q9 7 18 5 Q14 9 16 12 Q13 17 10 16 Q8 20 6 16 Z M16 7 Q22 3 25 8 Q22 12 24 18 Q20 22 19 16 Q15 14 16 7 Z M22 28 Q27 24 32 27 Q35 31 33 34 Q28 33 24 33 Q21 31 22 28 Z" fill="#5478ef"/></svg>
<div style="position:absolute;left:1482px;top:470px;width:1334.7px;height:1735.5px;overflow:hidden;background:#f6f6f6">
<div style="position:absolute;left:-1482px;top:-470px;width:4480px;height:2680px">
<div style="position:absolute;left:1482px;top:470px;width:1335px;height:128px;background:linear-gradient(to bottom,#ffffff 0%,#ffffff 50%,#f6f6f6 100%)"></div>
<div style="position:absolute;left:1740.4px;top:598px;width:1100px;height:1700px;background:#fff;border-left:1.6px solid #a7d7f9"></div>
<div style="position:absolute;left:1740.4px;top:537px;width:1.6px;height:61px;background:linear-gradient(to bottom,rgba(167,215,249,0) 0%,#a7d7f9 100%)"></div>
<div style="position:absolute;left:1742px;top:537px;width:81.6px;height:61px;background:#fff"></div>
<div style="position:absolute;left:1823.6px;top:537px;width:64.2px;height:61px;background:linear-gradient(to bottom,rgba(232,242,248,0) 0%,#e8f2f8 100%)"></div>
<div style="position:absolute;left:1823.6px;top:537px;width:1.6px;height:61px;background:linear-gradient(to bottom,rgba(167,215,249,0) 0%,#a7d7f9 100%)"></div>
<div style="position:absolute;left:1887px;top:537px;width:1.6px;height:61px;background:linear-gradient(to bottom,rgba(167,215,249,0) 0%,#a7d7f9 100%)"></div>
<div style="position:absolute;left:1823.6px;top:596.6px;width:418.4px;height:1.6px;background:#a7d7f9"></div>
<div style="position:absolute;left:2241.5px;top:537px;width:1.6px;height:61px;background:linear-gradient(to bottom,rgba(167,215,249,0) 0%,#a7d7f9 100%)"></div>
<div style="position:absolute;left:2243px;top:537px;width:74.3px;height:61px;background:#fff"></div>
<div style="position:absolute;left:2317.3px;top:537px;width:200.7px;height:61px;background:linear-gradient(to bottom,rgba(232,242,248,0) 0%,#e8f2f8 100%)"></div>
<div style="position:absolute;left:2317.3px;top:537px;width:1.6px;height:61px;background:linear-gradient(to bottom,rgba(167,215,249,0) 0%,#a7d7f9 100%)"></div>
<div style="position:absolute;left:2379.4px;top:537px;width:1.6px;height:61px;background:linear-gradient(to bottom,rgba(167,215,249,0) 0%,#a7d7f9 100%)"></div>
<div style="position:absolute;left:2516.6px;top:537px;width:1.6px;height:61px;background:linear-gradient(to bottom,rgba(167,215,249,0) 0%,#a7d7f9 100%)"></div>
<div style="position:absolute;left:2317.3px;top:596.6px;width:500px;height:1.6px;background:#a7d7f9"></div>
<div style="position:absolute;left:1754.4px;top:576.79px;line-height:0;white-space:nowrap;font-family:'Liberation Sans', sans-serif;font-size:20.8px;color:#2d2e2f;font-weight:normal;font-style:normal;">Article</div>
<div style="position:absolute;left:1838.8px;top:576.79px;line-height:0;white-space:nowrap;font-family:'Liberation Sans', sans-serif;font-size:20.8px;color:#3762c0;font-weight:normal;font-style:normal;">Talk</div>
<div style="position:absolute;left:2256.5px;top:576.39px;line-height:0;white-space:nowrap;font-family:'Liberation Sans', sans-serif;font-size:20.8px;color:#2d2e2f;font-weight:normal;font-style:normal;">Read</div>
<div style="position:absolute;left:2332.7px;top:576.39px;line-height:0;white-space:nowrap;font-family:'Liberation Sans', sans-serif;font-size:20.8px;color:#3762c0;font-weight:normal;font-style:normal;">Edit</div>
<div style="position:absolute;left:2394px;top:576.39px;line-height:0;white-space:nowrap;font-family:'Liberation Sans', sans-serif;font-size:20.8px;color:#3762c0;font-weight:normal;font-style:normal;">View history</div>
<div style="position:absolute;left:2531.8px;top:548.1px;width:270.8px;height:43.7px;background:#fff;border:1.6px solid #a2a9b1;border-radius:3px;box-sizing:border-box"></div>
<div style="position:absolute;left:2542.5px;top:571.03px;line-height:0;white-space:nowrap;font-family:'Liberation Sans', sans-serif;font-size:20.7px;color:#72777d;font-weight:normal;font-style:normal;">Search Wikipedia</div>
<svg style="position:absolute;left:2767px;top:556px" width="26" height="27" viewBox="0 0 26 27"><circle cx="10" cy="10" r="7.8" fill="none" stroke="#222" stroke-width="2.6"/><path d="M15.5 16 L23.5 24.5" stroke="#222" stroke-width="2.8"/></svg>
<svg style="position:absolute;left:2266px;top:486.8px" width="20" height="21" viewBox="0 0 20 21"><circle cx="10" cy="5.5" r="5.5" fill="#54595d"/><path d="M0 21 V17 Q0 12 6 12 H14 Q20 12 20 17 V21 Z" fill="#54595d"/></svg>
<div style="position:absolute;left:2294.4px;top:501.18px;line-height:0;white-space:nowrap;font-family:'Liberation Sans', sans-serif;font-size:19.1px;color:#54595d;font-weight:normal;font-style:normal;">Not logged in</div>
<div style="position:absolute;left:2422.3px;top:501.18px;line-height:0;white-space:nowrap;font-family:'Liberation Sans', sans-serif;font-size:19.1px;color:#3762c0;font-weight:normal;font-style:normal;">Talk</div>
<div style="position:absolute;left:2471.3px;top:501.18px;line-height:0;white-space:nowrap;font-family:'Liberation Sans', sans-serif;font-size:19.1px;color:#3762c0;font-weight:normal;font-style:normal;">Contributions</div>
<div style="position:absolute;left:2599.2px;top:501.18px;line-height:0;white-space:nowrap;font-family:'Liberation Sans', sans-serif;font-size:19.1px;color:#3762c0;font-weight:normal;font-style:normal;">Create account</div>
<div style="position:absolute;left:2745px;top:501.18px;line-height:0;white-space:nowrap;font-family:'Liberation Sans', sans-serif;font-size:19.1px;color:#3762c0;font-weight:normal;font-style:normal;">Log in</div>
<svg style="position:absolute;left:1526px;top:496px" width="170" height="153" viewBox="0 0 170 153">
<defs><radialGradient id="gl" cx="0.42" cy="0.5" r="0.6"><stop offset="0" stop-color="#ffffff"/><stop offset="0.45" stop-color="#ececec"/><stop offset="0.8" stop-color="#c4c4c4"/><stop offset="1" stop-color="#9a9a9a"/></radialGradient></defs>
<path d="M2.5 80 C2.5 125 40 151 84.5 151 C129 151 166.6 125 166.6 80 C166.6 55 158 35 145 22 L132 10 L118 6 L104 4 L92 10 L78 12 L76 34 L47 36 L46 4 L32 10 L20 22 L10 42 C5 55 2.5 68 2.5 80 Z" fill="url(#gl)"/>
<path d="M29.8 39.5 L47 37 L74.2 37.6 L74.2 45.1 L52.5 50.8 L51.5 58.3 L45.9 59.3 L44 50.8 L29.8 51.7 Z" fill="#6d6c6a"/>
<g fill="none" stroke="#d0d0d0" stroke-width="1.1">
<path d="M8 62 Q45 70 90 58 Q125 50 162 62"/><path d="M5 100 Q45 110 92 100 Q128 92 164 102"/><path d="M8 130 Q50 140 95 132 Q130 126 150 130"/>
<path d="M47 36 Q38 90 50 148"/><path d="M76 34 Q68 90 82 151"/><path d="M118 6 Q110 80 122 148"/><path d="M145 22 Q155 80 148 128"/>
</g>
<g font-family="Liberation Serif" fill="#2a2a2a">
<text x="38" y="84" font-size="24">Ω</text><text x="86" y="62" font-size="20" transform="rotate(15 96 54)">W</text>
<text x="104" y="120" font-size="22" transform="rotate(-8 110 110)">И</text><text x="48" y="126" font-size="17">維</text><text x="80" y="32" font-size="13">ウィ</text>
<text x="130" y="142" font-size="15">7</text><text x="10" y="104" font-size="13">अ</text><text x="148" y="82" font-size="16">ه</text><text x="16" y="70" font-size="12">ಆ</text>
</g>
</svg>
<div style="position:absolute;left:1515px;top:675.41px;line-height:0;white-space:nowrap;font-family:'Liberation Serif', serif;font-size:38.5px;color:#000;font-weight:normal;font-style:normal;letter-spacing:2.2px"><span style="font-size:38.5px">W</span><span style="font-size:30.5px">IKIPEDI</span><span style="font-size:38.5px">A</span></div>
<div style="position:absolute;left:1515px;top:705.62px;line-height:0;white-space:nowrap;font-family:'Liberation Serif', serif;font-size:20.4px;color:#000;font-weight:normal;font-style:normal;">The Free Encyclopedia</div>
<div style="position:absolute;left:1513.3px;top:784.38px;line-height:0;white-space:nowrap;font-family:'Liberation Sans', sans-serif;font-size:19.1px;color:#3762c0;font-weight:normal;font-style:normal;"></div>
<div style="position:absolute;left:1513.3px;top:784.38px;line-height:0;white-space:nowrap;font-family:'Liberation Sans', sans-serif;font-size:19.1px;color:#3762c0;font-weight:normal;font-style:normal;">Main page</div>
<div style="position:absolute;left:1513.3px;top:815.73px;line-height:0;white-space:nowrap;font-family:'Liberation Sans', sans-serif;font-size:19.1px;color:#3762c0;font-weight:normal;font-style:normal;">Contents</div>
<div style="position:absolute;left:1513.3px;top:847.08px;line-height:0;white-space:nowrap;font-family:'Liberation Sans', sans-serif;font-size:19.1px;color:#3762c0;font-weight:normal;font-style:normal;">Current events</div>
<div style="position:absolute;left:1513.3px;top:878.43px;line-height:0;white-space:nowrap;font-family:'Liberation Sans', sans-serif;font-size:19.1px;color:#3762c0;font-weight:normal;font-style:normal;">Random article</div>
<div style="position:absolute;left:1513.3px;top:909.78px;line-height:0;white-space:nowrap;font-family:'Liberation Sans', sans-serif;font-size:19.1px;color:#3762c0;font-weight:normal;font-style:normal;">About Wikipedia</div>
<div style="position:absolute;left:1513.3px;top:941.13px;line-height:0;white-space:nowrap;font-family:'Liberation Sans', sans-serif;font-size:19.1px;color:#3762c0;font-weight:normal;font-style:normal;">Contact us</div>
<div style="position:absolute;left:1513.3px;top:972.48px;line-height:0;white-space:nowrap;font-family:'Liberation Sans', sans-serif;font-size:19.1px;color:#3762c0;font-weight:normal;font-style:normal;">Donate</div>
<div style="position:absolute;left:1513.3px;top:1027.38px;line-height:0;white-space:nowrap;font-family:'Liberation Sans', sans-serif;font-size:19.1px;color:#54595d;font-weight:normal;font-style:normal;">Contribute</div>
<div style="position:absolute;left:1513px;top:1041px;width:212px;height:1.6px;background:linear-gradient(to right,rgba(200,204,209,0) 0%,#c8ccd1 33%,#c8ccd1 66%,rgba(200,204,209,0) 100%)"></div>
<div style="position:absolute;left:1513.3px;top:1066.18px;line-height:0;white-space:nowrap;font-family:'Liberation Sans', sans-serif;font-size:19.1px;color:#3762c0;font-weight:normal;font-style:normal;">Help</div>
<div style="position:absolute;left:1513.3px;top:1097.53px;line-height:0;white-space:nowrap;font-family:'Liberation Sans', sans-serif;font-size:19.1px;color:#3762c0;font-weight:normal;font-style:normal;">Learn to edit</div>
<div style="position:absolute;left:1513.3px;top:1128.88px;line-height:0;white-space:nowrap;font-family:'Liberation Sans', sans-serif;font-size:19.1px;color:#3762c0;font-weight:normal;font-style:normal;">Community portal</div>
<div style="position:absolute;left:1513.3px;top:1160.23px;line-height:0;white-space:nowrap;font-family:'Liberation Sans', sans-serif;font-size:19.1px;color:#3762c0;font-weight:normal;font-style:normal;">Recent changes</div>
<div style="position:absolute;left:1513.3px;top:1191.58px;line-height:0;white-space:nowrap;font-family:'Liberation Sans', sans-serif;font-size:19.1px;color:#3762c0;font-weight:normal;font-style:normal;">Upload file</div>
<div style="position:absolute;left:1513.3px;top:1245.78px;line-height:0;white-space:nowrap;font-family:'Liberation Sans', sans-serif;font-size:19.1px;color:#54595d;font-weight:normal;font-style:normal;">Tools</div>
<div style="position:absolute;left:1513px;top:1259.4px;width:212px;height:1.6px;background:linear-gradient(to right,rgba(200,204,209,0) 0%,#c8ccd1 33%,#c8ccd1 66%,rgba(200,204,209,0) 100%)"></div>
<div style="position:absolute;left:1513.3px;top:1285.98px;line-height:0;white-space:nowrap;font-family:'Liberation Sans', sans-serif;font-size:19.1px;color:#3762c0;font-weight:normal;font-style:normal;">What links here</div>
<div style="position:absolute;left:1513.3px;top:1317.33px;line-height:0;white-space:nowrap;font-family:'Liberation Sans', sans-serif;font-size:19.1px;color:#3762c0;font-weight:normal;font-style:normal;">Related changes</div>
<div style="position:absolute;left:1513.3px;top:1348.68px;line-height:0;white-space:nowrap;font-family:'Liberation Sans', sans-serif;font-size:19.1px;color:#3762c0;font-weight:normal;font-style:normal;">Special pages</div>
<div style="position:absolute;left:1513.3px;top:1380.03px;line-height:0;white-space:nowrap;font-family:'Liberation Sans', sans-serif;font-size:19.1px;color:#3762c0;font-weight:normal;font-style:normal;">Permanent link</div>
<div style="position:absolute;left:1513.3px;top:1411.38px;line-height:0;white-space:nowrap;font-family:'Liberation Sans', sans-serif;font-size:19.1px;color:#3762c0;font-weight:normal;font-style:normal;">Page information</div>
<div style="position:absolute;left:1513.3px;top:1442.73px;line-height:0;white-space:nowrap;font-family:'Liberation Sans', sans-serif;font-size:19.1px;color:#3762c0;font-weight:normal;font-style:normal;">Cite this page</div>
<div style="position:absolute;left:1513.3px;top:1474.08px;line-height:0;white-space:nowrap;font-family:'Liberation Sans', sans-serif;font-size:19.1px;color:#3762c0;font-weight:normal;font-style:normal;">Wikidata item</div>
<div style="position:absolute;left:1513.3px;top:1528.18px;line-height:0;white-space:nowrap;font-family:'Liberation Sans', sans-serif;font-size:19.1px;color:#54595d;font-weight:normal;font-style:normal;">Print/export</div>
<div style="position:absolute;left:1513px;top:1541.8px;width:212px;height:1.6px;background:linear-gradient(to right,rgba(200,204,209,0) 0%,#c8ccd1 33%,#c8ccd1 66%,rgba(200,204,209,0) 100%)"></div>
<div style="position:absolute;left:1513.3px;top:1566.28px;line-height:0;white-space:nowrap;font-family:'Liberation Sans', sans-serif;font-size:19.1px;color:#3762c0;font-weight:normal;font-style:normal;">Download as PDF</div>
<div style="position:absolute;left:1513.3px;top:1620.78px;line-height:0;white-space:nowrap;font-family:'Liberation Sans', sans-serif;font-size:19.1px;color:#54595d;font-weight:normal;font-style:normal;">In other projects</div>
<div style="position:absolute;left:1513px;top:1634.4px;width:212px;height:1.6px;background:linear-gradient(to right,rgba(200,204,209,0) 0%,#c8ccd1 33%,#c8ccd1 66%,rgba(200,204,209,0) 100%)"></div>
<div style="position:absolute;left:1513.3px;top:1661.78px;line-height:0;white-space:nowrap;font-family:'Liberation Sans', sans-serif;font-size:19.1px;color:#3762c0;font-weight:normal;font-style:normal;">Wikimedia Commons</div>
<div style="position:absolute;left:1513.3px;top:1693.13px;line-height:0;white-space:nowrap;font-family:'Liberation Sans', sans-serif;font-size:19.1px;color:#3762c0;font-weight:normal;font-style:normal;">Wikispecies</div>
<div style="position:absolute;left:1513.3px;top:1746.98px;line-height:0;white-space:nowrap;font-family:'Liberation Sans', sans-serif;font-size:19.1px;color:#54595d;font-weight:normal;font-style:normal;">Languages</div>
<div style="position:absolute;left:1513px;top:1760.6px;width:212px;height:1.6px;background:linear-gradient(to right,rgba(200,204,209,0) 0%,#c8ccd1 33%,#c8ccd1 66%,rgba(200,204,209,0) 100%)"></div>
<div style="position:absolute;left:1513.3px;top:1786.88px;line-height:0;white-space:nowrap;font-family:'Liberation Sans', sans-serif;font-size:19.1px;color:#3762c0;font-weight:normal;font-style:normal;">Català</div>
<div style="position:absolute;left:1513.3px;top:1819.18px;line-height:0;white-space:nowrap;font-family:'Liberation Sans', sans-serif;font-size:19.1px;color:#3762c0;font-weight:normal;font-style:normal;">Cebuano</div>
<div style="position:absolute;left:1513.3px;top:1850.48px;line-height:0;white-space:nowrap;font-family:'Liberation Sans', sans-serif;font-size:19.1px;color:#3762c0;font-weight:normal;font-style:normal;">Español</div>
<div style="position:absolute;left:1513.3px;top:1881.98px;line-height:0;white-space:nowrap;font-family:'Liberation Sans', sans-serif;font-size:19.1px;color:#3762c0;font-weight:normal;font-style:normal;">فارسی</div>
<div style="position:absolute;left:1513.3px;top:1914.08px;line-height:0;white-space:nowrap;font-family:'Liberation Sans', sans-serif;font-size:19.1px;color:#3762c0;font-weight:normal;font-style:normal;">Français</div>
<div style="position:absolute;left:1513.3px;top:1945.38px;line-height:0;white-space:nowrap;font-family:'Liberation Sans', sans-serif;font-size:19.1px;color:#3762c0;font-weight:normal;font-style:normal;">Italiano</div>
<div style="position:absolute;left:1513.3px;top:1976.88px;line-height:0;white-space:nowrap;font-family:'Liberation Sans', sans-serif;font-size:19.1px;color:#3762c0;font-weight:normal;font-style:normal;">עברית</div>
<div style="position:absolute;left:1513.3px;top:2007.78px;line-height:0;white-space:nowrap;font-family:'Liberation Sans', sans-serif;font-size:19.1px;color:#3762c0;font-weight:normal;font-style:normal;">Қазақша</div>
<div style="position:absolute;left:1513.3px;top:2038.98px;line-height:0;white-space:nowrap;font-family:'Liberation Sans', sans-serif;font-size:19.1px;color:#3762c0;font-weight:normal;font-style:normal;">Коми</div>
<div style="position:absolute;left:1513.3px;top:2071.08px;line-height:0;white-space:nowrap;font-family:'Liberation Sans', sans-serif;font-size:19.1px;color:#3762c0;font-weight:normal;font-style:normal;">Кырык мары</div>
<div style="position:absolute;left:1513.3px;top:2102.38px;line-height:0;white-space:nowrap;font-family:'Liberation Sans', sans-serif;font-size:19.1px;color:#3762c0;font-weight:normal;font-style:normal;">Magyar</div>
<div style="position:absolute;left:1513.3px;top:2133.68px;line-height:0;white-space:nowrap;font-family:'Liberation Sans', sans-serif;font-size:19.1px;color:#3762c0;font-weight:normal;font-style:normal;">മലയാളം</div>
<div style="position:absolute;left:1513.3px;top:2164.98px;line-height:0;white-space:nowrap;font-family:'Liberation Sans', sans-serif;font-size:19.1px;color:#3762c0;font-weight:normal;font-style:normal;">Nederlands</div>
<div style="position:absolute;left:1513.3px;top:2196.38px;line-height:0;white-space:nowrap;font-family:'Liberation Sans', sans-serif;font-size:19.1px;color:#3762c0;font-weight:normal;font-style:normal;">日本語</div>
<div style="position:absolute;left:1768px;top:654.62px;line-height:0;white-space:nowrap;font-family:'Liberation Serif', serif;font-size:50.3px;color:#000;font-weight:normal;font-style:italic;">Calathea</div>
<div style="position:absolute;left:1767px;top:684px;width:1025px;height:1.6px;background:#a2a9b1"></div>
<div style="position:absolute;left:1768px;top:713.46px;line-height:0;white-space:nowrap;font-family:'Liberation Sans', sans-serif;font-size:20.6px;color:#3c3f42;font-weight:normal;font-style:normal;">From Wikipedia, the free encyclopedia</div>
<div style="position:absolute;left:1768px;top:773.61px;line-height:0;white-space:nowrap;font-family:'Liberation Sans', sans-serif;font-size:22.47px;color:#2d2e2f;font-weight:normal;font-style:normal;"><b><i>Calathea</i></b> is a genus of flowering plant belonging to the <span style="color:#3762c0">family</span></div>
<div style="position:absolute;left:1768px;top:809.01px;line-height:0;white-space:nowrap;font-family:'Liberation Sans', sans-serif;font-size:22.47px;color:#2d2e2f;font-weight:normal;font-style:normal;"><span style="color:#3762c0">Marantaceae</span>. They are commonly called <b>calatheas</b> or (like</div>
<div style="position:absolute;left:1768px;top:844.61px;line-height:0;white-space:nowrap;font-family:'Liberation Sans', sans-serif;font-size:22.47px;color:#2d2e2f;font-weight:normal;font-style:normal;">their relatives) <b>prayer plants</b>. About 200 species formerly</div>
<div style="position:absolute;left:1768px;top:879.91px;line-height:0;white-space:nowrap;font-family:'Liberation Sans', sans-serif;font-size:22.47px;color:#2d2e2f;font-weight:normal;font-style:normal;">assigned to <i>Calathea</i> are now in the genus <span style="color:#3762c0"><i>Goeppertia</i></span>.<span style="font-size:16.8px;position:relative;top:-9.5px;color:#3762c0">[1]</span></div>
<div style="position:absolute;left:1768px;top:915.11px;line-height:0;white-space:nowrap;font-family:'Liberation Sans', sans-serif;font-size:22.47px;color:#2d2e2f;font-weight:normal;font-style:normal;">There are several dozen species in this genus. <span style="color:#3762c0">Native</span> to the</div>
<div style="position:absolute;left:1768px;top:951.21px;line-height:0;white-space:nowrap;font-family:'Liberation Sans', sans-serif;font-size:22.47px;color:#2d2e2f;font-weight:normal;font-style:normal;"><span style="color:#3762c0">tropical</span> Americas, many of the species are popular as <span style="color:#3762c0">pot</span></div>
<div style="position:absolute;left:1768px;top:986.11px;line-height:0;white-space:nowrap;font-family:'Liberation Sans', sans-serif;font-size:22.47px;color:#2d2e2f;font-weight:normal;font-style:normal;"><span style="color:#3762c0">plants</span> due to their decorative leaves and, in some species,</div>
<div style="position:absolute;left:1768px;top:1021.41px;line-height:0;white-space:nowrap;font-family:'Liberation Sans', sans-serif;font-size:22.47px;color:#2d2e2f;font-weight:normal;font-style:normal;">colorful <span style="color:#3762c0">inflorescences</span>. The young leaves and bracts can</div>
<div style="position:absolute;left:1768px;top:1057.01px;line-height:0;white-space:nowrap;font-family:'Liberation Sans', sans-serif;font-size:22.47px;color:#2d2e2f;font-weight:normal;font-style:normal;">retain pools of water, called <span style="color:#3762c0">phytotelmata</span>, that provide habitat</div>
<div style="position:absolute;left:1768px;top:1092.31px;line-height:0;white-space:nowrap;font-family:'Liberation Sans', sans-serif;font-size:22.47px;color:#2d2e2f;font-weight:normal;font-style:normal;">for many invertebrates.<span style="font-size:16.8px;position:relative;top:-9.5px;color:#3762c0">[2]</span></div>
<div style="position:absolute;left:1767.3px;top:1122.1px;width:270.2px;height:425.3px;background:#f8f9fa;border:1.6px solid #a2a9b1;box-sizing:border-box"></div>
<div style="position:absolute;left:1829.5px;top:1152.10px;line-height:0;white-space:nowrap;font-family:'Liberation Sans', sans-serif;font-size:21.35px;color:#2d2e2f;font-weight:normal;font-style:normal;"><b style="color:#000">Contents</b> <span style="color:#2d2e2f">[</span><span style="font-size:20px"><span style="color:#3762c0">hide</span></span><span style="color:#2d2e2f">]</span></div>
<div style="position:absolute;left:1780.3px;top:1192.20px;line-height:0;white-space:nowrap;font-family:'Liberation Sans', sans-serif;font-size:21.35px;color:#2d2e2f;font-weight:normal;font-style:normal;">1</div>
<div style="position:absolute;left:1803px;top:1192.20px;line-height:0;white-space:nowrap;font-family:'Liberation Sans', sans-serif;font-size:21.35px;color:#3762c0;font-weight:normal;font-style:normal;">Description</div>
<div style="position:absolute;left:1823.4px;top:1226.40px;line-height:0;white-space:nowrap;font-family:'Liberation Sans', sans-serif;font-size:21.35px;color:#2d2e2f;font-weight:normal;font-style:normal;">1.1</div>
<div style="position:absolute;left:1863.7px;top:1226.40px;line-height:0;white-space:nowrap;font-family:'Liberation Sans', sans-serif;font-size:21.35px;color:#3762c0;font-weight:normal;font-style:normal;">Foliage</div>
<div style="position:absolute;left:1780.3px;top:1261.90px;line-height:0;white-space:nowrap;font-family:'Liberation Sans', sans-serif;font-size:21.35px;color:#2d2e2f;font-weight:normal;font-style:normal;">2</div>
<div style="position:absolute;left:1803px;top:1261.90px;line-height:0;white-space:nowrap;font-family:'Liberation Sans', sans-serif;font-size:21.35px;color:#3762c0;font-weight:normal;font-style:normal;">Species</div>
<div style="position:absolute;left:1780.3px;top:1297.70px;line-height:0;white-space:nowrap;font-family:'Liberation Sans', sans-serif;font-size:21.35px;color:#2d2e2f;font-weight:normal;font-style:normal;">3</div>
<div style="position:absolute;left:1803px;top:1297.70px;line-height:0;white-space:nowrap;font-family:'Liberation Sans', sans-serif;font-size:21.35px;color:#3762c0;font-weight:normal;font-style:normal;">Cultivation</div>
<div style="position:absolute;left:1823.4px;top:1331.70px;line-height:0;white-space:nowrap;font-family:'Liberation Sans', sans-serif;font-size:21.35px;color:#2d2e2f;font-weight:normal;font-style:normal;">3.1</div>
<div style="position:absolute;left:1863.7px;top:1331.70px;line-height:0;white-space:nowrap;font-family:'Liberation Sans', sans-serif;font-size:21.35px;color:#3762c0;font-weight:normal;font-style:normal;">Cultivars</div>
<div style="position:absolute;left:1823.4px;top:1368.10px;line-height:0;white-space:nowrap;font-family:'Liberation Sans', sans-serif;font-size:21.35px;color:#2d2e2f;font-weight:normal;font-style:normal;">3.2</div>
<div style="position:absolute;left:1863.7px;top:1368.10px;line-height:0;white-space:nowrap;font-family:'Liberation Sans', sans-serif;font-size:21.35px;color:#3762c0;font-weight:normal;font-style:normal;">Growing medium</div>
<div style="position:absolute;left:1823.4px;top:1403.90px;line-height:0;white-space:nowrap;font-family:'Liberation Sans', sans-serif;font-size:21.35px;color:#2d2e2f;font-weight:normal;font-style:normal;">3.3</div>
<div style="position:absolute;left:1863.7px;top:1403.90px;line-height:0;white-space:nowrap;font-family:'Liberation Sans', sans-serif;font-size:21.35px;color:#3762c0;font-weight:normal;font-style:normal;">Houseplants</div>
<div style="position:absolute;left:1823.4px;top:1439.70px;line-height:0;white-space:nowrap;font-family:'Liberation Sans', sans-serif;font-size:21.35px;color:#2d2e2f;font-weight:normal;font-style:normal;">3.4</div>
<div style="position:absolute;left:1863.7px;top:1439.70px;line-height:0;white-space:nowrap;font-family:'Liberation Sans', sans-serif;font-size:21.35px;color:#3762c0;font-weight:normal;font-style:normal;">Propagation</div>
<div style="position:absolute;left:1780.3px;top:1476.10px;line-height:0;white-space:nowrap;font-family:'Liberation Sans', sans-serif;font-size:21.35px;color:#2d2e2f;font-weight:normal;font-style:normal;">4</div>
<div style="position:absolute;left:1803px;top:1476.10px;line-height:0;white-space:nowrap;font-family:'Liberation Sans', sans-serif;font-size:21.35px;color:#3762c0;font-weight:normal;font-style:normal;">Native uses</div>
<div style="position:absolute;left:1780.3px;top:1511.60px;line-height:0;white-space:nowrap;font-family:'Liberation Sans', sans-serif;font-size:21.35px;color:#2d2e2f;font-weight:normal;font-style:normal;">5</div>
<div style="position:absolute;left:1803px;top:1511.60px;line-height:0;white-space:nowrap;font-family:'Liberation Sans', sans-serif;font-size:21.35px;color:#3762c0;font-weight:normal;font-style:normal;">References</div>
<div style="position:absolute;left:1767.8px;top:1603.58px;line-height:0;white-space:nowrap;font-family:'Liberation Serif', serif;font-size:36.8px;color:#000;font-weight:normal;font-style:normal;">Description</div>
<div style="position:absolute;left:1963.5px;top:1607.60px;line-height:0;white-space:nowrap;font-family:'Liberation Sans', sans-serif;font-size:19.9px;color:#202122;font-weight:normal;font-style:normal;"><span style="color:#54595d">[</span><span style="color:#3762c0">edit</span><span style="color:#54595d">]</span></div>
<div style="position:absolute;left:1767px;top:1624.8px;width:622px;height:1.6px;background:#a2a9b1"></div>
<div style="position:absolute;left:1768px;top:1671.04px;line-height:0;white-space:nowrap;font-family:'Liberation Sans', sans-serif;font-size:26.45px;color:#000;font-weight:bold;font-style:normal;">Foliage</div>
<div style="position:absolute;left:1883.6px;top:1673.30px;line-height:0;white-space:nowrap;font-family:'Liberation Sans', sans-serif;font-size:19.9px;color:#202122;font-weight:normal;font-style:normal;"><span style="color:#54595d">[</span><span style="color:#3762c0">edit</span><span style="color:#54595d">]</span></div>
<div style="position:absolute;left:1768px;top:1719.61px;line-height:0;white-space:nowrap;font-family:'Liberation Sans', sans-serif;font-size:22.47px;color:#2d2e2f;font-weight:normal;font-style:normal;">During the night, the leaves fold up.<span style="font-size:16.8px;position:relative;top:-9.5px;color:#3762c0">[3]</span> In the morning, the</div>
<div style="position:absolute;left:1768px;top:1755.51px;line-height:0;white-space:nowrap;font-family:'Liberation Sans', sans-serif;font-size:22.47px;color:#2d2e2f;font-weight:normal;font-style:normal;">leaves unfurl in search of the morning sun. This phenomenon</div>
<div style="position:absolute;left:1768px;top:1790.81px;line-height:0;white-space:nowrap;font-family:'Liberation Sans', sans-serif;font-size:22.47px;color:#2d2e2f;font-weight:normal;font-style:normal;">is made possible by a small "joint"<span style="font-size:16.8px;position:relative;top:-9.5px;color:#3762c0">[3]</span> the plant possesses</div>
<div style="position:absolute;left:1768px;top:1825.71px;line-height:0;white-space:nowrap;font-family:'Liberation Sans', sans-serif;font-size:22.47px;color:#2d2e2f;font-weight:normal;font-style:normal;">between the stem and leaf.</div>
<div style="position:absolute;left:1768px;top:1899.85px;line-height:0;white-space:nowrap;font-family:'Liberation Serif', serif;font-size:36.0px;color:#000;font-weight:normal;font-style:normal;">Species</div>
<div style="position:absolute;left:1899.3px;top:1904.10px;line-height:0;white-space:nowrap;font-family:'Liberation Sans', sans-serif;font-size:19.9px;color:#202122;font-weight:normal;font-style:normal;"><span style="color:#54595d">[</span><span style="color:#3762c0">edit</span><span style="color:#54595d">]</span></div>
<div style="position:absolute;left:1767px;top:1920.8px;width:1024px;height:1.6px;background:#a2a9b1"></div>
<div style="position:absolute;left:1768px;top:1951.41px;line-height:0;white-space:nowrap;font-family:'Liberation Sans', sans-serif;font-size:22.47px;color:#2d2e2f;font-weight:normal;font-style:normal;">The following species are accepted:<span style="font-size:16.8px;position:relative;top:-9.5px;color:#3762c0">[4]</span></div>
<div style="position:absolute;left:1789.5px;top:1994.9px;width:7.5px;height:7.5px;background:#2d2e2f;border-radius:50%"></div>
<div style="position:absolute;left:1804.5px;top:1998.61px;line-height:0;white-space:nowrap;font-family:'Liberation Sans', sans-serif;font-size:22.47px;color:#2d2e2f;font-weight:normal;font-style:normal;"><i style="color:#d73a3a">Calathea anderssonii</i> <span style="font-size:19.1px">H.Kenn.</span></div>
<div style="position:absolute;left:1789.5px;top:2032.9px;width:7.5px;height:7.5px;background:#2d2e2f;border-radius:50%"></div>
<div style="position:absolute;left:1804.5px;top:2036.61px;line-height:0;white-space:nowrap;font-family:'Liberation Sans', sans-serif;font-size:22.47px;color:#2d2e2f;font-weight:normal;font-style:normal;"><i style="color:#3762c0">Calathea anulque</i> <span style="font-size:19.1px">H.Kenn.</span></div>
<div style="position:absolute;left:1789.5px;top:2070.1px;width:7.5px;height:7.5px;background:#2d2e2f;border-radius:50%"></div>
<div style="position:absolute;left:1804.5px;top:2073.81px;line-height:0;white-space:nowrap;font-family:'Liberation Sans', sans-serif;font-size:22.47px;color:#2d2e2f;font-weight:normal;font-style:normal;"><i style="color:#d73a3a">Calathea asplundii</i> <span style="font-size:19.1px">H.Kenn.</span></div>
<div style="position:absolute;left:1789.5px;top:2107.5px;width:7.5px;height:7.5px;background:#2d2e2f;border-radius:50%"></div>
<div style="position:absolute;left:1804.5px;top:2111.21px;line-height:0;white-space:nowrap;font-family:'Liberation Sans', sans-serif;font-size:22.47px;color:#2d2e2f;font-weight:normal;font-style:normal;"><i style="color:#d73a3a">Calathea barryi</i> <span style="font-size:19.1px">H.Kenn.</span></div>
<div style="position:absolute;left:1789.5px;top:2144.8px;width:7.5px;height:7.5px;background:#2d2e2f;border-radius:50%"></div>
<div style="position:absolute;left:1804.5px;top:2148.51px;line-height:0;white-space:nowrap;font-family:'Liberation Sans', sans-serif;font-size:22.47px;color:#2d2e2f;font-weight:normal;font-style:normal;"><i style="color:#d73a3a">Calathea brenesii</i> <span style="font-size:19.1px">Standl.</span></div>
<div style="position:absolute;left:1789.5px;top:2182.7px;width:7.5px;height:7.5px;background:#2d2e2f;border-radius:50%"></div>
<div style="position:absolute;left:1804.5px;top:2186.41px;line-height:0;white-space:nowrap;font-family:'Liberation Sans', sans-serif;font-size:22.47px;color:#2d2e2f;font-weight:normal;font-style:normal;"><i style="color:#d73a3a">Calathea caesariata</i> <span style="font-size:19.1px">H.Kenn.</span></div>
<div style="position:absolute;left:2411.9px;top:767.8px;width:378.8px;height:1097.6px;background:#f8f9fa;border:1.6px solid #a2a9b1;box-sizing:border-box"></div>
<div style="position:absolute;left:2422px;top:779.1px;width:357.7px;height:36.6px;background:#c3f6b5"></div>
<div style="position:absolute;left:2601.8px;transform:translateX(-50%);top:797.71px;line-height:0;white-space:nowrap;font-family:'Liberation Sans', sans-serif;font-size:22.47px;color:#000;font-weight:bold;font-style:italic;">Calathea</div>
<div id="photo" style="position:absolute;left:2423.4px;top:822.3px;width:354.6px;height:471.1px;overflow:hidden;background:#2d3a2a"><svg width="355" height="472" viewBox="0 0 355 472" style="position:absolute;left:0;top:0"><rect width="355" height="472" fill="#1f2b20"/><path d="M60.0 200.0 C67.5 186.5 109.5 198.0 120.0 210.0 C130.5 222.0 131.5 263.5 130.0 280.0 C128.5 296.5 119.0 317.0 110.0 320.0 C101.0 323.0 77.5 318.0 70.0 300.0 C62.5 282.0 52.5 213.5 60.0 200.0 Z" fill="#2c5437"/><path d="M250.0 280.0 C262.0 271.0 314.2 262.5 330.0 270.0 C345.8 277.5 359.5 318.0 355.0 330.0 C350.5 342.0 315.8 350.0 300.0 350.0 C284.2 350.0 257.5 340.5 250.0 330.0 C242.5 319.5 238.0 289.0 250.0 280.0 Z" fill="#2a4f35"/><path d="M0.0 240.0 C6.0 233.2 49.5 225.5 60.0 230.0 C70.5 234.5 76.0 263.2 70.0 270.0 C64.0 276.8 30.5 279.5 20.0 275.0 C9.5 270.5 -6.0 246.8 0.0 240.0 Z" fill="#2f5a3c"/><path d="M150.0 100.0 C157.5 94.0 194.0 101.0 200.0 110.0 C206.0 119.0 197.5 154.0 190.0 160.0 C182.5 166.0 156.0 159.0 150.0 150.0 C144.0 141.0 142.5 106.0 150.0 100.0 Z" fill="#2e5138"/><path d="M64.0 236.0 C71.7 228.5 112.9 230.4 121.0 240.0 C129.1 249.6 121.2 288.1 118.0 300.0 C114.8 311.9 107.2 320.5 100.0 319.0 C92.8 317.5 75.4 302.4 70.0 290.0 C64.6 277.6 56.4 243.5 64.0 236.0 Z" fill="#2d5a3a"/><path d="M153.0 143.0 C158.8 135.5 192.1 140.4 199.0 150.0 C205.9 159.6 204.8 199.5 199.0 207.0 C193.2 214.5 166.9 209.6 160.0 200.0 C153.1 190.4 147.2 150.5 153.0 143.0 Z" fill="#2f5a40"/><path d="M248.0 89.0 C250.1 81.8 259.9 83.9 262.0 92.0 C264.1 100.1 264.1 135.8 262.0 143.0 C259.9 150.2 250.1 148.1 248.0 140.0 C245.9 131.9 245.9 96.2 248.0 89.0 Z" fill="#3d6b4a"/><path d="M72.0 3.0 C77.2 -3.0 109.3 -0.6 115.0 5.0 C120.7 10.6 115.2 34.0 110.0 40.0 C104.8 46.0 85.7 50.5 80.0 45.0 C74.3 39.5 66.8 9.0 72.0 3.0 Z" fill="#6fa083"/><path d="M309.0 284.0 C315.0 276.5 348.1 280.6 355.0 290.0 C361.9 299.4 361.0 339.5 355.0 347.0 C349.0 354.5 321.9 349.4 315.0 340.0 C308.1 330.6 303.0 291.5 309.0 284.0 Z" fill="#2d5238"/><path d="M0 338 L80 344 L100 472 L0 472 Z" fill="#38332d"/><path d="M250 410 L300 420 L330 472 L240 472 Z" fill="#2b2925"/><g stroke="#3d7448" stroke-width="2.2" fill="none"><path d="M130 40 L122 300"/><path d="M152 30 L162 280"/><path d="M108 70 L118 260"/><path d="M205 150 L195 330"/><path d="M280 260 L300 120"/><path d="M332 190 L348 90"/><path d="M95 200 L130 330"/><path d="M236 180 L240 320"/></g><path d="M0.0 10.0 C9.0 -2.0 44.2 3.5 60.0 2.0 C75.8 0.5 99.8 -5.0 105.0 0.0 C110.2 5.0 101.8 25.7 95.0 35.0 C88.2 44.3 69.5 55.9 60.0 62.0 C50.5 68.2 41.0 73.0 32.0 76.0 C23.0 79.0 4.8 91.9 0.0 82.0 C-4.8 72.1 -9.0 22.0 0.0 10.0 Z" fill="#78ae90"/><path d="M48.0 13.0 C52.5 13.4 70.2 18.9 76.0 25.0 C81.8 31.1 86.4 43.5 87.0 54.0 C87.6 64.5 85.4 83.0 80.0 95.0 C74.6 107.0 61.0 126.8 51.0 134.0 C41.0 141.2 17.8 144.9 13.0 143.0 C8.2 141.1 12.4 130.0 19.0 121.0 C25.6 112.0 50.2 94.0 57.0 83.0 C63.8 72.0 65.7 57.1 64.0 48.0 C62.4 38.9 48.4 27.2 46.0 22.0 C43.6 16.8 43.5 12.6 48.0 13.0 Z" fill="#aed27a"/><path d="M134.0 0.0 C147.5 -3.3 202.4 -2.0 230.0 -2.0 C257.6 -2.0 305.2 -9.3 318.0 0.0 C330.8 9.3 318.9 45.8 315.0 60.0 C311.1 74.2 305.5 92.3 292.0 95.0 C278.5 97.7 243.3 85.0 225.0 78.0 C206.7 71.0 182.8 56.7 170.0 48.0 C157.2 39.3 145.4 27.2 140.0 20.0 C134.6 12.8 120.5 3.3 134.0 0.0 Z" fill="#a9cf76"/><path d="M300.0 0.0 C303.0 -8.2 346.8 -12.0 355.0 0.0 C363.2 12.0 358.0 71.8 355.0 80.0 C352.0 88.2 343.2 67.0 335.0 55.0 C326.8 43.0 297.0 8.2 300.0 0.0 Z" fill="#9dc86e"/><path d="M312.0 32.0 C316.2 27.2 334.0 25.3 340.0 28.0 C346.0 30.7 351.2 42.2 352.0 50.0 C352.8 57.8 348.9 74.3 345.0 80.0 C341.1 85.7 330.9 91.0 326.0 88.0 C321.1 85.0 314.1 68.4 312.0 60.0 C309.9 51.6 307.8 36.8 312.0 32.0 Z" fill="#e4eff2"/><path d="M89.0 150.0 C90.0 142.3 118.7 117.2 134.0 108.0 C149.3 98.8 174.8 88.5 191.0 89.0 C207.2 89.5 241.1 103.3 242.0 111.0 C242.9 118.7 214.2 132.8 197.0 140.0 C179.8 147.2 143.2 157.5 127.0 159.0 C110.8 160.5 88.0 157.7 89.0 150.0 Z" fill="#93c7a4"/><path d="M0.0 143.0 C14.2 135.5 84.0 126.7 95.0 130.0 C106.0 133.3 82.5 156.9 73.0 165.0 C63.5 173.1 43.0 181.8 32.0 184.0 C21.0 186.2 4.8 186.2 0.0 180.0 C-4.8 173.8 -14.2 150.5 0.0 143.0 Z" fill="#9fd1ae"/><path d="M0.0 197.0 C12.0 191.3 56.6 192.3 80.0 191.0 C103.4 189.7 147.9 185.6 156.0 188.0 C164.1 190.4 145.4 201.8 134.0 207.0 C122.6 212.2 92.5 218.2 80.0 223.0 C67.5 227.8 63.0 238.1 51.0 239.0 C39.0 239.9 7.6 235.3 0.0 229.0 C-7.6 222.7 -12.0 202.7 0.0 197.0 Z" fill="#a8d8b6"/><path d="M223.0 140.0 C230.1 136.8 266.9 127.5 286.0 127.0 C305.1 126.5 345.2 133.6 350.0 137.0 C354.8 140.4 334.6 148.3 318.0 150.0 C301.4 151.7 253.2 149.5 239.0 148.0 C224.8 146.5 215.9 143.2 223.0 140.0 Z" fill="#93c6a3"/><path d="M175.0 165.0 C182.7 159.3 255.2 149.1 267.0 153.0 C278.9 156.9 256.4 181.6 254.0 191.0 C251.6 200.4 256.7 216.0 251.0 216.0 C245.3 216.0 227.4 198.7 216.0 191.0 C204.6 183.3 167.3 170.7 175.0 165.0 Z" fill="#8cc19e"/><path d="M211.0 296.0 C208.6 292.4 224.7 295.1 232.0 290.0 C239.3 284.9 249.8 269.5 260.0 262.0 C270.2 254.5 285.8 245.1 300.0 240.0 C314.2 234.9 346.8 220.5 355.0 228.0 C363.2 235.5 363.2 277.4 355.0 290.0 C346.8 302.6 316.1 308.4 300.0 312.0 C283.9 315.6 261.4 316.4 248.0 314.0 C234.7 311.6 213.4 299.6 211.0 296.0 Z" fill="#99cdab"/><path d="M230.0 250.0 C234.5 242.9 251.2 222.5 270.0 215.0 C288.8 207.5 342.2 198.1 355.0 200.0 C367.8 201.9 364.8 221.2 355.0 228.0 C345.2 234.8 307.2 239.9 290.0 245.0 C272.8 250.1 249.0 261.2 240.0 262.0 C231.0 262.8 225.5 257.1 230.0 250.0 Z" fill="#90c6a3"/><path d="M0.0 274.0 C7.2 262.4 36.6 265.2 48.0 267.0 C59.4 268.8 70.3 278.8 76.0 286.0 C81.7 293.2 87.8 307.4 86.0 315.0 C84.2 322.6 74.0 332.2 64.0 337.0 C54.0 341.8 28.6 345.9 19.0 347.0 C9.4 348.1 2.9 354.9 0.0 344.0 C-2.9 333.1 -7.2 285.6 0.0 274.0 Z" fill="#7db593"/><path d="M270.0 331.0 C277.6 318.1 289.2 320.2 302.0 324.0 C314.8 327.8 347.1 333.8 355.0 356.0 C362.9 378.2 360.6 454.6 355.0 472.0 C349.4 489.4 330.8 480.9 318.0 472.0 C305.2 463.1 280.1 422.3 270.0 413.0 C259.9 403.7 251.0 422.3 251.0 410.0 C251.0 397.7 262.4 343.9 270.0 331.0 Z" fill="#4c8866"/><path d="M94.0 474.0 C86.5 462.9 95.0 420.2 100.0 400.0 C105.0 379.8 118.5 351.9 127.0 339.0 C135.6 326.1 150.2 316.4 157.0 314.0 C163.8 311.6 164.8 320.6 172.0 323.0 C179.2 325.4 192.7 327.6 205.0 330.0 C217.3 332.4 242.4 334.1 254.0 339.0 C265.6 343.9 279.6 354.6 282.0 363.0 C284.4 371.4 274.2 387.8 270.0 395.0 C265.8 402.2 265.9 402.6 254.0 411.0 C242.2 419.4 206.6 441.6 191.0 451.0 C175.4 460.4 164.6 470.6 150.0 474.0 C135.4 477.4 101.5 485.1 94.0 474.0 Z" fill="#8dc3a1"/><rect x="122" y="213" width="20" height="73" rx="6" fill="#e3a248"/><rect x="143" y="239" width="22" height="54" rx="6" fill="#e3a248"/><rect x="146" y="57" width="35" height="38" rx="6" fill="#e6a84e"/><rect x="64" y="102" width="16" height="35" rx="6" fill="#c98f40"/><rect x="162" y="197" width="21" height="51" rx="6" fill="#a57838"/><rect x="223" y="213" width="19" height="41" rx="6" fill="#a57838"/><rect x="267" y="89" width="13" height="32" rx="6" fill="#a57838"/><g stroke="#c8e9d2" stroke-width="1.6" fill="none" opacity="0.8"><path d="M110 460 L250 350"/><path d="M100 150 L230 108"/><path d="M5 225 L150 190"/><path d="M225 300 L350 215"/><path d="M190 170 L250 210"/></g><path d="M296 0 L172 266" stroke="#4f8f55" stroke-width="3" fill="none"/></svg></div>
<div style="position:absolute;left:2601.7px;transform:translateX(-50%);top:1319.57px;line-height:0;white-space:nowrap;font-family:'Liberation Sans', sans-serif;font-size:19.7px;color:#2d2e2f;font-weight:normal;font-style:italic;">Calathea crotalifera</div>
<div style="position:absolute;left:2422px;top:1342.1px;width:357.7px;height:37.3px;background:#c3f6b5"></div>
<div style="position:absolute;left:2477.2px;top:1360.91px;line-height:0;white-space:nowrap;font-family:'Liberation Sans', sans-serif;font-size:22.47px;color:#3762c0;font-weight:bold;font-style:normal;">Scientific classification</div>
<svg style="position:absolute;left:2743px;top:1350px" width="28" height="27" viewBox="0 0 28 27"><path d="M4 19 L19 4 Q22 1 25 4 Q28 7 25 10 L10 25 Z" fill="#d9534f"/><path d="M4 19 L10 25 L2 27 Z" fill="#e8a040"/><path d="M2 25 L1 27 L3 26.5 Z" fill="#333"/></svg>
<div style="position:absolute;left:2424.4px;top:1402.31px;line-height:0;white-space:nowrap;font-family:'Liberation Sans', sans-serif;font-size:22.47px;color:#2d2e2f;font-weight:normal;font-style:normal;">Kingdom:</div>
<div style="position:absolute;left:2568.5px;top:1402.31px;line-height:0;white-space:nowrap;font-family:'Liberation Sans', sans-serif;font-size:22.47px;color:#3762c0;font-weight:normal;font-style:normal;">Plantae</div>
<div style="position:absolute;left:2424.4px;top:1444.41px;line-height:0;white-space:nowrap;font-family:'Liberation Sans', sans-serif;font-size:22.47px;color:#2d2e2f;font-weight:normal;font-style:italic;">Clade:</div>
<div style="position:absolute;left:2568.5px;top:1444.41px;line-height:0;white-space:nowrap;font-family:'Liberation Sans', sans-serif;font-size:22.47px;color:#3762c0;font-weight:normal;font-style:normal;">Tracheophytes</div>
<div style="position:absolute;left:2424.4px;top:1485.81px;line-height:0;white-space:nowrap;font-family:'Liberation Sans', sans-serif;font-size:22.47px;color:#2d2e2f;font-weight:normal;font-style:italic;">Clade:</div>
<div style="position:absolute;left:2568.5px;top:1485.81px;line-height:0;white-space:nowrap;font-family:'Liberation Sans', sans-serif;font-size:22.47px;color:#3762c0;font-weight:normal;font-style:normal;">Angiosperms</div>
<div style="position:absolute;left:2424.4px;top:1527.41px;line-height:0;white-space:nowrap;font-family:'Liberation Sans', sans-serif;font-size:22.47px;color:#2d2e2f;font-weight:normal;font-style:italic;">Clade:</div>
<div style="position:absolute;left:2568.5px;top:1527.41px;line-height:0;white-space:nowrap;font-family:'Liberation Sans', sans-serif;font-size:22.47px;color:#3762c0;font-weight:normal;font-style:normal;">Monocots</div>
<div style="position:absolute;left:2424.4px;top:1568.91px;line-height:0;white-space:nowrap;font-family:'Liberation Sans', sans-serif;font-size:22.47px;color:#2d2e2f;font-weight:normal;font-style:italic;">Clade:</div>
<div style="position:absolute;left:2568.5px;top:1568.91px;line-height:0;white-space:nowrap;font-family:'Liberation Sans', sans-serif;font-size:22.47px;color:#3762c0;font-weight:normal;font-style:normal;">Commelinids</div>
<div style="position:absolute;left:2424.4px;top:1611.01px;line-height:0;white-space:nowrap;font-family:'Liberation Sans', sans-serif;font-size:22.47px;color:#2d2e2f;font-weight:normal;font-style:normal;">Order:</div>
<div style="position:absolute;left:2568.5px;top:1611.01px;line-height:0;white-space:nowrap;font-family:'Liberation Sans', sans-serif;font-size:22.47px;color:#3762c0;font-weight:normal;font-style:normal;">Zingiberales</div>
<div style="position:absolute;left:2424.4px;top:1653.61px;line-height:0;white-space:nowrap;font-family:'Liberation Sans', sans-serif;font-size:22.47px;color:#2d2e2f;font-weight:normal;font-style:normal;">Family:</div>
<div style="position:absolute;left:2568.5px;top:1653.61px;line-height:0;white-space:nowrap;font-family:'Liberation Sans', sans-serif;font-size:22.47px;color:#3762c0;font-weight:normal;font-style:normal;">Marantaceae</div>
<div style="position:absolute;left:2424.4px;top:1695.51px;line-height:0;white-space:nowrap;font-family:'Liberation Sans', sans-serif;font-size:22.47px;color:#2d2e2f;font-weight:normal;font-style:normal;">Genus:</div>
<div style="position:absolute;left:2568.5px;top:1695.51px;line-height:0;white-space:nowrap;font-family:'Liberation Sans', sans-serif;font-size:22.47px;color:#000;font-weight:bold;font-style:italic;">Calathea</div>
<div style="position:absolute;left:2568.8px;top:1730.98px;line-height:0;white-space:nowrap;font-family:'Liberation Sans', sans-serif;font-size:19.1px;color:#d73a3a;font-weight:normal;font-style:normal;">G.Mey.</div>
<div style="position:absolute;left:2422.2px;top:1753.4px;width:357.3px;height:37.4px;background:#c3f6b5"></div>
<div style="position:absolute;left:2601.1px;transform:translateX(-50%);top:1772.21px;line-height:0;white-space:nowrap;font-family:'Liberation Sans', sans-serif;font-size:22.47px;color:#000;font-weight:bold;font-style:normal;">Species</div>
<div style="position:absolute;left:2424.7px;top:1825.41px;line-height:0;white-space:nowrap;font-family:'Liberation Sans', sans-serif;font-size:22.47px;color:#2d2e2f;font-weight:normal;font-style:normal;">Numerous, see <span style="color:#3762c0">text</span></div>
</div></div>
<div style="position:absolute;left:1479px;top:467px;width:1355.5px;height:3px;background:#8c8f8c"></div>
<div style="position:absolute;left:1479px;top:467px;width:3px;height:1738.5px;background:#8c8f8c"></div>
<div style="position:absolute;left:2816.7px;top:470px;width:18.3px;height:1735.5px;background:#f1f1f1"></div>
<div style="position:absolute;left:2816.7px;top:470px;width:18.3px;height:28px;background:#f0f1f3"></div>
<svg style="position:absolute;left:2823px;top:480px" width="12" height="9"><path d="M1 8 L7 1 L13 8 Z" fill="#a3a3a3"/></svg>
<div style="position:absolute;left:2818.3px;top:498px;width:16.7px;height:1707.5px;background:#c1c2c4"></div>
<div style="position:absolute;left:2835px;top:467px;width:12px;height:1751px;background:#dedede"></div>
<div style="position:absolute;left:1479px;top:2205.5px;width:1356px;height:12.5px;background:#dedede"></div>
<div style="position:absolute;left:2835px;top:2205.5px;width:12px;height:12.5px;background:#fcfcfc"></div>
</div></body></html>
